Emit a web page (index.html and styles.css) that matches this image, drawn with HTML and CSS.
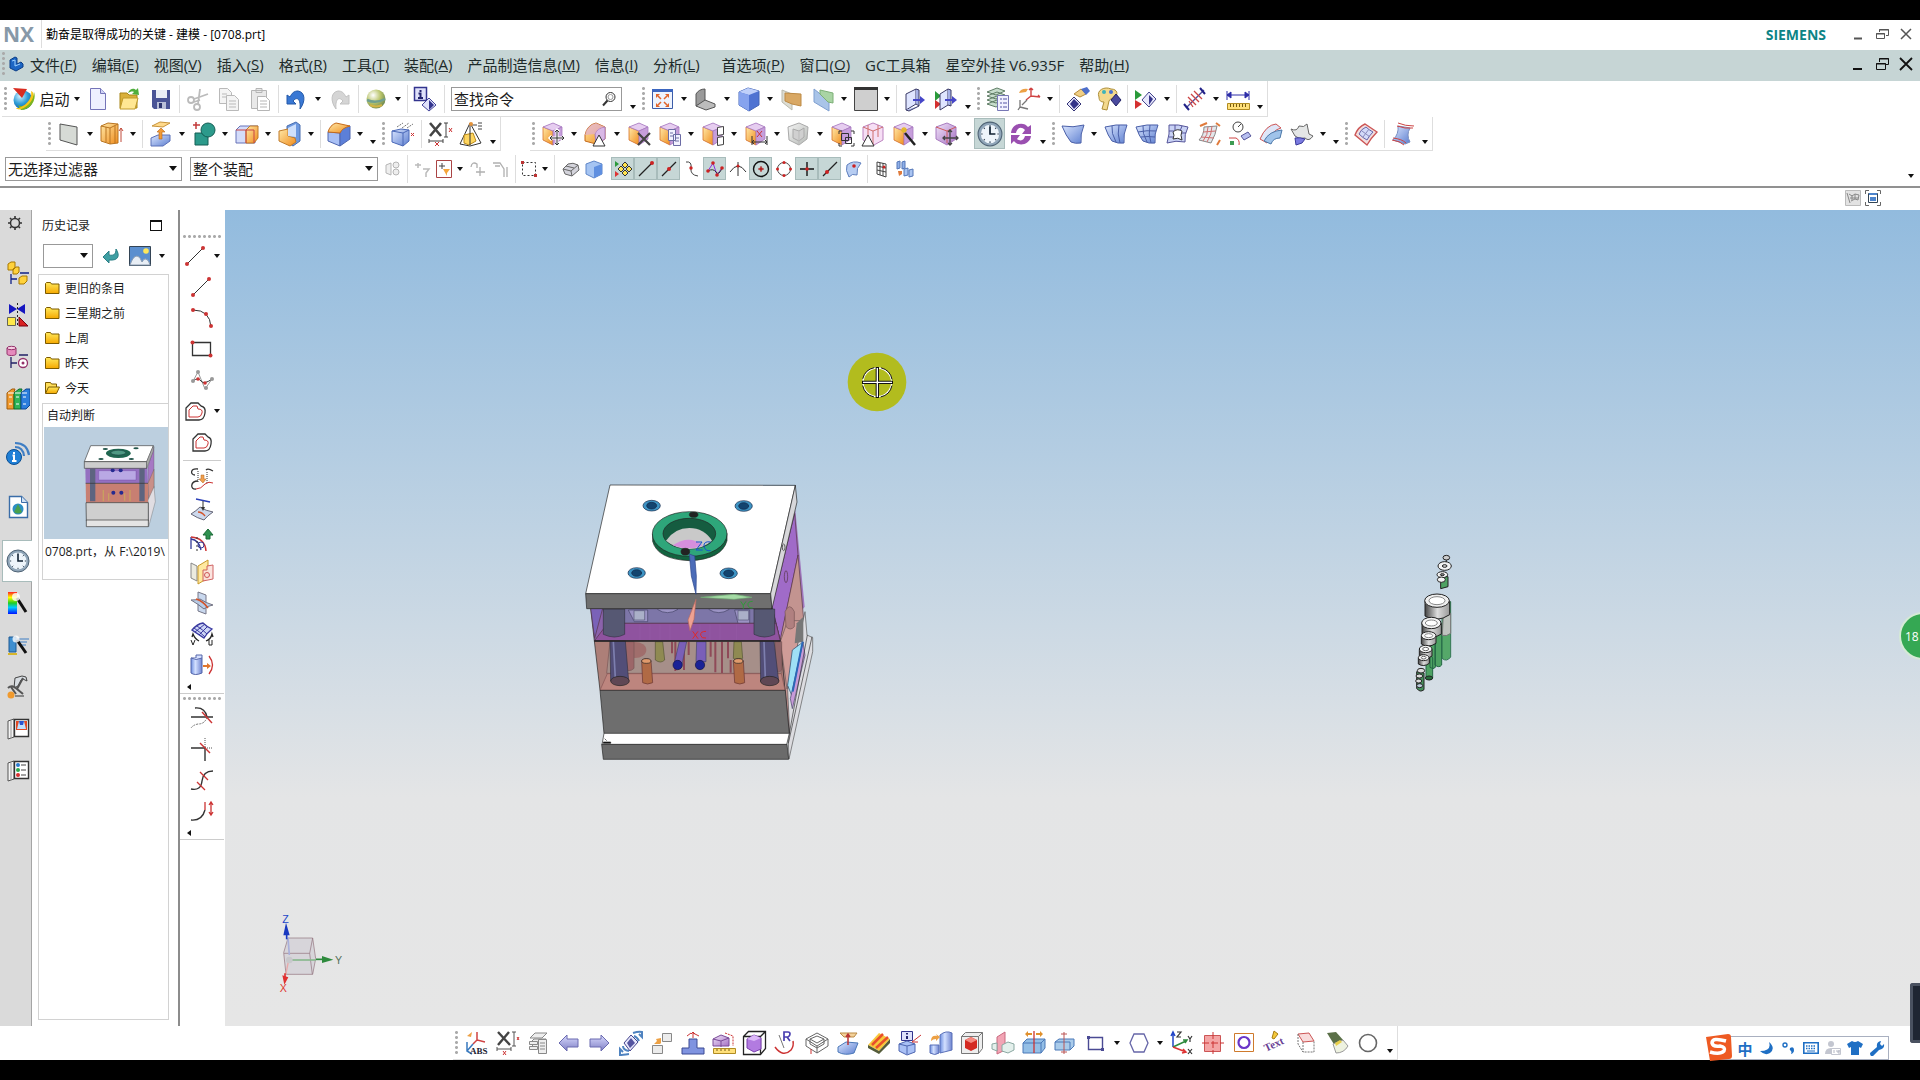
FILE: index.html
```html
<!DOCTYPE html>
<html lang="zh-CN">
<head>
    <meta charset="UTF-8">
    <meta name="viewport" content="width=device-width, initial-scale=1.0">
    <title>建模 - [0708.prt]</title>
    <link rel="stylesheet" href="styles.css">
</head>
<body>

<!-- Shared gradients and shapes -->
<svg class="defs" aria-hidden="true">
    <defs>
        <linearGradient id="gBlue" x1="0" y1="0" x2="1" y2="1"><stop offset="0" stop-color="#dbe6ff"/><stop offset="1" stop-color="#5d7fd0"/></linearGradient>
        <linearGradient id="gBlueH"><stop offset="0" stop-color="#6d8ee0"/><stop offset=".4" stop-color="#d3e0ff"/><stop offset="1" stop-color="#6e83cf"/></linearGradient>
        <linearGradient id="gGold" x1="0" y1="0" x2="1" y2="1"><stop offset="0" stop-color="#ffe9a8"/><stop offset="1" stop-color="#f08c1c"/></linearGradient>
        <linearGradient id="gPurple" x1="0" y1="0" x2="1" y2="1"><stop offset="0" stop-color="#f0e4f8"/><stop offset="1" stop-color="#a571c4"/></linearGradient>
        <linearGradient id="gArrow" x1="0" y1="0" x2="0" y2="1"><stop offset="0" stop-color="#d9dbff"/><stop offset="1" stop-color="#7f7fc4"/></linearGradient>
        <linearGradient id="gGray" x1="0" y1="0" x2="1" y2="1"><stop offset="0" stop-color="#f5f5f5"/><stop offset="1" stop-color="#b5b9b5"/></linearGradient>
        <linearGradient id="gFolder" x1="0" y1="0" x2="0" y2="1"><stop offset="0" stop-color="#ffe95c"/><stop offset="1" stop-color="#f5a800"/></linearGradient>
        <linearGradient id="gRainbow" x1="0" y1="0" x2="0" y2="1"><stop offset="0" stop-color="#f22"/><stop offset=".25" stop-color="#ff0"/><stop offset=".5" stop-color="#2c2"/><stop offset=".7" stop-color="#0cf"/><stop offset="1" stop-color="#01f"/></linearGradient>
        <linearGradient id="gSteel"><stop offset="0" stop-color="#444"/><stop offset=".5" stop-color="#ddd"/><stop offset="1" stop-color="#999"/></linearGradient>
        <radialGradient id="gGlobe" cx=".35" cy=".3" r=".8"><stop offset="0" stop-color="#fff"/><stop offset=".5" stop-color="#b9c46a"/><stop offset="1" stop-color="#5f7c4c"/></radialGradient>
        <radialGradient id="gEarth" cx=".35" cy=".3" r=".8"><stop offset="0" stop-color="#d7f3ff"/><stop offset=".5" stop-color="#2f9ed8"/><stop offset="1" stop-color="#0d4f96"/></radialGradient>
    </defs>
    <symbol id="cube" viewBox="0 0 26 26">
        <path d="M3 6 13 2l9 4v12l-9 6-10-5z" fill="#b78bcf"/>
        <path d="M3 6l10 4v14L3 19z" fill="url(#gGold)" stroke="#d8752a" stroke-width=".8"/>
        <path d="M3 6l10-4 9 4-9 4z" fill="#e6cdf0" stroke="#a87bc0" stroke-width=".8"/>
        <path d="M13 10l9-4v12l-9 6z" fill="#c69edb" stroke="#a87bc0" stroke-width=".8"/>
    </symbol>
    <symbol id="bluecube" viewBox="0 0 26 26">
        <path d="M3 6l9-4 11 3v14l-10 6-10-6z" fill="#4f73d2" stroke="#4566b8"/>
        <path d="M3 6l9-4 11 3-10 4z" fill="#bfd0fa"/>
        <path d="M3 6l10 3v16L3 19z" fill="#86a3ee"/>
    </symbol>
    <symbol id="clock" viewBox="0 0 24 24">
        <circle cx="12" cy="12" r="11" fill="#8fa5b8" stroke="#4f6375"/>
        <circle cx="12" cy="12" r="8.5" fill="#eef5fb"/>
        <path d="M12 5v7h5" fill="none" stroke="#123" stroke-width="1.6"/>
        <path d="M12 3.8v1.4M12 18.8v1.4M3.8 12h1.4M18.8 12h1.4M6.2 6.2l1 1M17.8 6.2l-1 1M6.2 17.8l1-1M17.8 17.8l-1-1" stroke="#345"/>
    </symbol>
    <symbol id="folder" viewBox="0 0 15 13">
        <path d="M.5 2.5l1-1h4l1 1.5h7.5v9.5H.5z" fill="url(#gFolder)" stroke="#7d5b00"/>
    </symbol>
    <symbol id="book" viewBox="0 0 24 24">
        <path d="M2 4l6-2v18l-6 2z" fill="#f4f4f4" stroke="#555"/><path d="M5 4v17" stroke="#999"/>
        <path d="M8.5 2.5h14v17h-14z" fill="#fff" stroke="#333" stroke-width="1.4"/>
    </symbol>
</svg>

<div class="app">
    <header class="titlebar">
        <span class="logo">NX</span>
        <h1 class="title">勤奋是取得成功的关键 - 建模 - [0708.prt]</h1>
        <span class="brand">SIEMENS</span>
        <div class="winbtns">
            <button aria-label="最小化"><svg viewBox="0 0 16 16"><path d="M4 12.5h8" stroke-width="2"/></svg></button>
            <button aria-label="还原"><svg viewBox="0 0 16 16"><path d="M5.5 6V3.5h9v6H12M2.5 7.5h8v5h-8zM5 4h10M2 8h9"/></svg></button>
            <button aria-label="关闭"><svg viewBox="0 0 16 16"><path d="M3 3l10 10M13 3L3 13" stroke-width="1.5"/></svg></button>
        </div>
    </header>

    <nav class="menubar">
        <span class="grip"></span>
        <svg class="menuicon" viewBox="0 0 16 16"><path d="M2 4l5-3 2 1v6l4-2 2 2v3l-7 4-6-3z" fill="#1c66c4" stroke="#0b3d86"/><path d="M4 5l3-1v6l5-2" fill="none" stroke="#9cd0ff"/></svg>
        <button>文件(<u>F</u>)</button>
        <button>编辑(<u>E</u>)</button>
        <button>视图(<u>V</u>)</button>
        <button>插入(<u>S</u>)</button>
        <button>格式(<u>R</u>)</button>
        <button>工具(<u>T</u>)</button>
        <button>装配(<u>A</u>)</button>
        <button>产品制造信息(<u>M</u>)</button>
        <button>信息(<u>I</u>)</button>
        <button class="wide">分析(<u>L</u>)</button>
        <button>首选项(<u>P</u>)</button>
        <button>窗口(<u>O</u>)</button>
        <button>GC工具箱</button>
        <button>星空外挂 V6.935F</button>
        <button>帮助(<u>H</u>)</button>
        <div class="winbtns dark">
            <button aria-label="最小化窗口"><svg viewBox="0 0 16 16"><path d="M3 13h9" stroke-width="2"/></svg></button>
            <button aria-label="还原窗口"><svg viewBox="0 0 16 16"><path d="M5.5 6V2.5h9v6H12M2.5 7.5h9v6h-9zM5 3h10M2 8h10"/></svg></button>
            <button aria-label="关闭窗口"><svg viewBox="0 0 16 16"><path d="M2 2l12 12M14 2L2 14" stroke-width="1.8"/></svg></button>
        </div>
    </nav>

    <!-- Standard / view / utility toolbars -->
    <div class="row row1">
        <div class="toolbar">
            <span class="grip"></span>
            <button class="start"><svg viewBox="0 0 26 26"><circle cx="13" cy="14" r="9.5" fill="url(#gEarth)"/><path d="M8 19c5 4 15-3 16-13 3 8-4 18-13 18z" fill="#7bb41e"/><path d="M21 5c4 1 3 8-2 13-5 5-11 7-13 4 6 1 17-8 15-17z" fill="#f5c518"/><path d="M3 2l14 1-5 9z" fill="#d92c20"/></svg>启动</button>
            <button class="dd" aria-label="启动选项"></button>
            <button class="tb" aria-label="新建"><svg viewBox="0 0 26 26"><path d="M4.500 2.500h10l5 5v16h-15z" fill="#eef0ff" stroke="#7474b8"/><path d="M14.500 2.500v5h5" fill="#cfd3f5" stroke="#7474b8"/></svg></button>
            <button class="tb" aria-label="打开"><svg viewBox="0 0 26 26"><path d="M3 7h7l2 2h8v13H3z" fill="#d9b13a" stroke="#a98618"/><path d="M3 23l3-11h15l-3 11z" fill="#ffe793" stroke="#c09a2b"/><path d="M11 7c2-5 6-5 8-3l2-2 1 7-7-1 2-2c-2-1-4 0-6 1z" fill="#4fae3c"/></svg></button>
            <button class="tb" aria-label="保存"><svg viewBox="0 0 26 26"><path d="M4 4h18v19H6l-2-2z" fill="#4a5496"/><path d="M8 4h11v8H8z" fill="#e9edf5"/><path d="M9 16h9v7H9z" fill="#b9bfd8"/><path d="M11 17h3v5h-3z" fill="#2d3570"/></svg></button>
            <span class="sep"></span>
            <button class="tb" aria-label="剪切"><svg viewBox="0 0 26 26" fill="none" stroke="#bbb" stroke-width="1.8"><circle cx="6" cy="14" r="3"/><circle cx="12" cy="21" r="3"/><path d="M9 13l14-5M13 18l2-15M9 16l6-2"/></svg></button>
            <button class="tb" aria-label="复制"><svg viewBox="0 0 26 26" fill="#f4f4f4" stroke="#b9b9b9"><path d="M3.5 2.5h8l4 4v11h-12z"/><path d="M10.5 9.5h8l4 4v11h-12zM13 15h7M13 18h7M13 21h7M6 8h5M6 11h4"/></svg></button>
            <button class="tb" aria-label="粘贴"><svg viewBox="0 0 26 26" fill="#e9e9e9" stroke="#b5b5b5"><path d="M4.5 4.5h15v18h-15zM9 2.5h6v4H9z"/><path d="M10.5 10.5h8l4 4v10h-12zM13 15h7M13 18h7M13 21h7" fill="#fff"/></svg></button>
            <span class="sep"></span>
            <button class="tb" aria-label="撤销"><svg viewBox="0 0 26 26"><path d="M3 9v9h9l-3-3c4-5 8-2 7 8 6-8 5-17-2-18-4 0-6 2-8 6z" fill="#3978d4" stroke="#2459a8"/></svg></button>
            <button class="dd" aria-label="撤销列表"></button>
            <button class="tb" aria-label="重做"><svg viewBox="0 0 26 26"><path d="M22 9v9h-9l3-3c-4-5-8-2-7 8-6-8-5-17 2-18 4 0 6 2 8 6z" fill="#d5d5d5" stroke="#c2c2c2"/></svg></button>
            <span class="sep"></span>
            <button class="tb" aria-label="渲染"><svg viewBox="0 0 26 26"><circle cx="12" cy="13" r="9.500" fill="url(#gGlobe)"/><path d="M3 14q9 4 18-1" stroke="#6f9f90" stroke-width="2.500" fill="none"/><path d="M6 19q6 3 12 0" stroke="#d3b445" stroke-width="2" fill="none"/></svg></button>
            <button class="dd" aria-label="渲染选项"></button>
            <span class="sep"></span>
            <button class="tb" aria-label="命令信息"><svg viewBox="0 0 26 26"><path d="M1.5 1.5h12v13h-12z" fill="#dfe1fa" stroke="#33348e" stroke-width="1.5"/><path d="M7.5 4v2M5.5 7.5h2v4M5 12h5" stroke="#22236f" stroke-width="2" fill="none"/><path d="M9 19l7-7 7 7-7 6z" fill="#dfe1fa" stroke="#44459a"/><path d="M16 14v10l5-5z" fill="#33348e"/></svg></button>
            <span class="sep"></span>
            <label class="search"><input type="text" value="查找命令" aria-label="查找命令"><svg viewBox="0 0 16 16" fill="none" stroke="#333"><circle cx="9.5" cy="6" r="4.5"/><circle cx="9.5" cy="6" r="2.5" stroke="#999"/><path d="M6.5 9.5L2 14.5" stroke-width="2"/></svg></label>
            <button class="more" aria-label="更多标准工具"></button>
        </div>
        <div class="toolbar">
            <span class="grip"></span>
            <button class="tb" aria-label="适合窗口"><svg viewBox="0 0 26 26"><path d="M2.5 3.5h20v19h-20z" fill="#eef3fd" stroke="#3c5ca8"/><path d="M2 3h21v3H2z" fill="#3b66c0"/><path d="M8 10l3 3M17 10l-3 3M8 19l3-3M17 19l-3-3" stroke="#e0642a" stroke-width="1.5"/><path d="M6 8h4l-4 4zM19 8h-4l4 4zM6 21h4l-4-4zM19 21h-4l4-4z" fill="#e0642a"/></svg></button>
            <button class="dd" aria-label="适合窗口选项"></button>
            <button class="tb" aria-label="定向视图"><svg viewBox="0 0 26 26" stroke="#555"><path d="M3 8q3-5 9-5v12l-9 5z" fill="#9a9a9a"/><path d="M3 20l9-6 10 4v3l-9 3z" fill="#bcbcbc"/></svg></button>
            <button class="dd" aria-label="定向视图选项"></button>
            <button class="tb" aria-label="着色"><svg viewBox="0 0 26 26"><use href="#bluecube"/></svg></button>
            <button class="dd" aria-label="着色选项"></button>
            <button class="tb" aria-label="编辑截面"><svg viewBox="0 0 26 26"><path d="M3 4l10 4v16L3 16z" fill="#dcdcd2" stroke="#b9b9ad"/><path d="M6 7l16 1v12l-9-2-7-3z" fill="#d9a864" stroke="#bd8a44"/></svg></button>
            <button class="tb" aria-label="剪切截面"><svg viewBox="0 0 26 26"><path d="M4 3l15 12v10L4 16z" fill="#a9c4e8" stroke="#7f9fd0"/><path d="M10 4l13 3v10l-5-1-8-8z" fill="#a9d4a4" stroke="#7db077"/></svg></button>
            <button class="dd" aria-label="剪切截面选项"></button>
            <button class="tb" aria-label="背景"><svg viewBox="0 0 26 26"><path d="M1.5 1.5h23v23h-23z" fill="#cfcfcf" stroke="#444"/><path d="M1 1h24v3H1z" fill="#333"/></svg></button>
            <button class="dd" aria-label="背景选项"></button>
            <span class="sep"></span>
            <button class="tb" aria-label="显示"><svg viewBox="0 0 26 26"><path d="M4 8l10-5v15l-10 6z" fill="#dfe5ff" stroke="#3a3a66"/><path d="M14 3l3 1v16l-3-2M4 24l3 1 10-5" fill="#a6b1e5" stroke="#3a3a66"/><path d="M11 13h7v-3l5 4-5 4v-3h-7z" fill="#4646c8"/></svg></button>
            <button class="tb" aria-label="隐藏"><svg viewBox="0 0 26 26"><path d="M2 5l6 5-6 5z" fill="#2a9a3a"/><path d="M2 14l6 4-6 5z" fill="#d43030"/><path d="M7 8l8-5v16l-8 5z" fill="#dfe5ff" stroke="#3a3a66"/><path d="M15 3l3 1v16l-3-1" fill="#a6b1e5" stroke="#3a3a66"/><path d="M12 13h7v-3l5 4-5 4v-3h-7z" fill="#4646c8"/></svg></button>
            <button class="more" aria-label="更多视图工具"></button>
        </div>
        <div class="toolbar end">
            <span class="grip"></span>
            <button class="tb" aria-label="图层设置"><svg viewBox="0 0 26 26" stroke="#5f7d66"><path d="M2 18l10-4 8 3-9 4zM2 14l10-4 8 3-9 4zM2 10l10-4 8 3-9 4zM2 6l10-4 8 3-9 4z" fill="#c6dccb"/><path d="M12.5 9.5h11v15h-11z" fill="#f1f1ff" stroke="#7777b5"/><path d="M15 13h2M15 17h2M15 21h2M18 13h4M18 17h4M18 21h4" stroke="#5555a5"/></svg></button>
            <button class="tb" aria-label="WCS"><svg viewBox="0 0 26 26" fill="none"><path d="M3 7q2-5 9-4l-2 3z" fill="#eda145"/><path d="M15 2v8l-5 4M15 10l9 1M15 2l-2 2M15 2l2 2M24 11l-2-2" stroke="#cf4343" stroke-width="1.4"/><path d="M4 14v7l-2 3M4 21l8 2M6 19l5-5" stroke="#777" stroke-width="1.3"/></svg></button>
            <button class="dd" aria-label="WCS 选项"></button>
            <span class="sep"></span>
            <button class="tb" aria-label="编辑显示"><svg viewBox="0 0 26 26"><path d="M2 18l7-7 7 7-7 7z" fill="#e7e7fb" stroke="#333377"/><path d="M9 13l5 5-5 5-4-5z" fill="#35358a"/><path d="M9 8l7-5 5 5-6 3z" fill="#f0cf85" stroke="#b48a3b"/><path d="M16 3l6-2 3 4-4 4z" fill="#4e6fcb"/></svg></button>
            <button class="tb" aria-label="对象显示"><svg viewBox="0 0 26 26"><path d="M3 11c-3-7 6-11 12-8 7 0 7 6 4 8-2 2-5 1-6 4l-2 9-5-1 2-7c-3 0-5-1-5-5z" fill="#f3d98d" stroke="#ad8e38"/><circle cx="8" cy="6" r="2" fill="#3cb4bb"/><circle cx="15" cy="6" r="2" fill="#4a72d0"/><path d="M15 14l5-6 5 6-5 6z" fill="#4a4a9e" stroke="#222266"/></svg></button>
            <span class="sep"></span>
            <button class="tb" aria-label="显示和隐藏"><svg viewBox="0 0 26 26"><path d="M2 4l7 5-7 5z" fill="#2a9a3a"/><path d="M2 14l7 4-7 5z" fill="#d43030"/><path d="M9 14l7-8 7 7-7 8z" fill="#e7e7fb" stroke="#44448c"/><path d="M16 9l4 4-4 6z" fill="#35358a"/></svg></button>
            <button class="dd" aria-label="显示和隐藏选项"></button>
            <span class="sep"></span>
            <button class="tb" aria-label="测量"><svg viewBox="0 0 26 26" fill="none" stroke="#cc4545" stroke-width="1.3"><path d="M4 22L22 4" stroke="#4d4d9d"/><path d="M6 11l8 8M9 8l8 8M12 5l8 8M7 15l4 6"/><path d="M2 18l5 6M18 2l5 6" stroke="#222288" stroke-width="2"/></svg></button>
            <button class="dd" aria-label="测量选项"></button>
            <button class="tb" aria-label="测量距离"><svg viewBox="0 0 26 26"><path d="M2 5v9M24 5v9" stroke="#2c2ca8"/><path d="M2 9h22M2 9l4-3v6zM24 9l-4-3v6z" fill="#2c2ca8" stroke="#2c2ca8"/><path d="M2.5 17.5h22v6h-22z" fill="#ffe07a" stroke="#b18c22"/><path d="M5.5 18v3M8.5 18v3M11.5 18v3M14.5 18v3M17.5 18v3M20.5 18v3" stroke="#775c11"/></svg></button>
            <button class="more" aria-label="更多实用工具"></button>
        </div>
    </div>

    <!-- Feature / synchronous modelling / surface toolbars -->
    <div class="row row2">
        <div class="toolbar">
            <span class="grip"></span>
            <button class="tb" aria-label="基准平面"><svg viewBox="0 0 26 26"><path d="M4 3l17 3v18L4 19z" fill="#d6dad5" stroke="#555"/></svg></button>
            <button class="dd" aria-label="基准平面选项"></button>
            <button class="tb" aria-label="拉伸"><svg viewBox="0 0 26 26" stroke="#b97522"><path d="M2 5l7-3 10 1v19l-8 1-9-3z" fill="url(#gGold)"/><path d="M7 6v15M11 7v16M16 5v17M2 5l9 2 8-4" fill="none"/><path d="M22 7v14M20 10l2-3 2 3" stroke="#c04a3a" fill="none"/></svg></button>
            <button class="dd" aria-label="拉伸选项"></button>
            <span class="sep"></span>
            <button class="tb" aria-label="偏置面"><svg viewBox="0 0 26 26"><path d="M4 5l8-4 10 1-7 4z" fill="#ffd98a" stroke="#c8943c"/><path d="M3 17l7-3h12v6l-7 5H3z" fill="url(#gBlue)" stroke="#5a70b8"/><path d="M13 7l4 4h-3v7h-3v-7H9z" fill="#f29b36" stroke="#b5651a" stroke-width=".6"/></svg></button>
            <button class="dd" aria-label="偏置面选项"></button>
            <button class="tb" aria-label="合并"><svg viewBox="0 0 26 26"><path d="M4 12h13v12H4z" fill="#2c9a8b" stroke="#155e55"/><circle cx="17" cy="9" r="7" fill="#2c9a8b" stroke="#155e55"/><path d="M5 1v7M2 4h7" stroke="#c23a3a" stroke-width="1.5"/></svg></button>
            <button class="dd" aria-label="合并选项"></button>
            <button class="tb" aria-label="分割"><svg viewBox="0 0 26 26"><path d="M2 9l4-4h18l-3 4v13H2z" fill="#d4dcfa" stroke="#6673b8"/><path d="M12 9l4-4h8v12l-4 5h-8z" fill="url(#gGold)" stroke="#c07a2a"/><path d="M2 9h18v13M12 9v13" fill="none" stroke="#c94444"/></svg></button>
            <button class="dd" aria-label="分割选项"></button>
            <button class="tb" aria-label="修剪体"><svg viewBox="0 0 26 26"><path d="M10 5l9-4 4 3v16l-7 5-6-4z" fill="#6d99e0" stroke="#4a6fb0"/><path d="M2 10l9-2v7l7 2 1 4-6 4-11-5z" fill="url(#gGold)" stroke="#c07a2a"/><path d="M11 7l8-4v13l-8-1z" fill="#cfe0fb"/></svg></button>
            <button class="dd" aria-label="修剪体选项"></button>
            <span class="sep"></span>
            <button class="tb" aria-label="边倒圆"><svg viewBox="0 0 26 26"><path d="M2 11l12 1v13L2 20z" fill="#a9c0f5" stroke="#4e66b0"/><path d="M14 12q1-5 10-7v13l-10 7z" fill="#5c7fd8" stroke="#4e66b0"/><path d="M2 11q2-7 8-9l14 3q-8 2-10 7z" fill="url(#gGold)" stroke="#c56a1a"/></svg></button>
            <button class="dd" aria-label="边倒圆选项"></button>
            <button class="more" aria-label="更多特征"></button>
        </div>
        <div class="toolbar end">
            <span class="grip"></span>
            <button class="tb" aria-label="阵列特征"><svg viewBox="0 0 26 26"><path d="M2 10l9-2 8 1v11l-6 5-11-4z" fill="url(#gBlue)" stroke="#4a68b8"/><path d="M2 10l11 2 6-3M13 12v13" fill="none" stroke="#4a68b8"/><path d="M7 6l6-4M12 7l7-5M17 7l6-4" stroke="#777" stroke-dasharray="2 1"/><path d="M21 12l3 3M24 12l-3 3" stroke="#c33"/></svg></button>
            <span class="sep"></span>
            <button class="tb" aria-label="表达式"><svg viewBox="0 0 26 26"><path d="M3 2l11 13M14 2L3 15" stroke="#444" stroke-width="2.6"/><path d="M19 2v14M17 2h4M17 16h4M2 20h14M2 18v4M16 18v4" stroke="#444"/><path d="M22 7l3 4M25 7l-3 4M8 21l4 4M12 21l-4 4" stroke="#c33"/></svg></button>
            <button class="tb" aria-label="参考"><svg viewBox="0 0 26 26"><path d="M12 2L2 23l10 2 11-3z" fill="none" stroke="#333"/><path d="M6 14l9-2 3 8-7 4-5-2z" fill="#ffd65f" stroke="#b98a1a"/><path d="M12 2v22" stroke="#333"/><path d="M14 4h5M20 2h4M20 5h4M20 8h4" stroke="#444"/><circle cx="13" cy="3" r="2" fill="#e4933a"/></svg></button>
            <button class="more" aria-label="更多特征操作"></button>
        </div>
        <div class="toolbar gap">
            <span class="grip"></span>
            <button class="tb" aria-label="移动面"><svg viewBox="0 0 26 26"><use href="#cube"/><path d="M17 9v15M10 17h14M15 11l2-2 2 2M15 22l2 2 2-2M12 15l-2 2 2 2M22 15l2 2-2 2" fill="none" stroke="#fff" stroke-width="3"/><path d="M17 9v15M10 17h14M15 11l2-2 2 2M15 22l2 2 2-2M12 15l-2 2 2 2M22 15l2 2-2 2" fill="none" stroke="#333"/></svg></button>
            <button class="dd" aria-label="移动面选项"></button>
            <button class="tb" aria-label="拉出面"><svg viewBox="0 0 26 26"><path d="M2 14q2-10 11-12l9 4v12l-9 5-11-3z" fill="url(#gGold)" stroke="#c56a1a"/><path d="M12 13q2-6 10-7v12l-9 5z" fill="#d9b8e6" stroke="#a87bc0"/><path d="M2 14q2-10 11-12l9 4q-8 1-10 7z" fill="#e0aed0" opacity=".7"/><path d="M16 14l6 11H10z" fill="#fff" stroke="#333"/></svg></button>
            <button class="dd" aria-label="拉出面选项"></button>
            <button class="tb" aria-label="删除面"><svg viewBox="0 0 26 26"><use href="#cube"/><path d="M12 12l12 12M24 12L12 24" stroke="#444" stroke-width="2.2"/></svg></button>
            <button class="tb" aria-label="复制面"><svg viewBox="0 0 26 26"><use href="#cube"/><path d="M11.5 8.5h7v11h-7zM16.5 13.5h7v11h-7z" fill="#f2f2ff" stroke="#6c6ca5"/><path d="M13 12h3M13 15h3M18 17h4M18 20h4" stroke="#6c6ca5"/></svg></button>
            <button class="dd" aria-label="复制面选项"></button>
            <button class="tb" aria-label="设为共面"><svg viewBox="0 0 26 26"><use href="#cube"/><path d="M17.5 6.5l6-1v8l-6 1zM17.5 16.5l6-1v8l-6 1z" fill="#fff" stroke="#444"/></svg></button>
            <button class="dd" aria-label="设为共面选项"></button>
            <button class="tb" aria-label="线性尺寸"><svg viewBox="0 0 26 26"><use href="#cube"/><path d="M9 15v9M24 15v9M9 21h15M11 19l-2 2 2 2M22 19l2 2-2 2" stroke="#333" fill="none"/><path d="M14 10l5 6M19 10l-5 6" stroke="#c33"/></svg></button>
            <button class="dd" aria-label="线性尺寸选项"></button>
            <button class="tb" aria-label="壳体"><svg viewBox="0 0 26 26"><path d="M2 6l11-4 9 4-1 12-8 6-10-5z" fill="url(#gGray)" stroke="#aaa"/><path d="M7 8l6 2 5-3v9l-5 4-6-3z" fill="#d0d0d0" stroke="#aaa"/><path d="M13 10v14" stroke="#bbb" fill="none"/></svg></button>
            <button class="dd" aria-label="壳体选项"></button>
            <button class="tb" aria-label="组合面"><svg viewBox="0 0 26 26"><use href="#cube"/><path d="M12.5 12.5h7v7h-7zM16.5 16.5h6v6h-6z" fill="none" stroke="#333"/><path d="M10 10h3M10 10v3M25 25h-3M25 25v-3M25 10h-3M25 10v3M10 25h3M10 25v-3" stroke="#333"/></svg></button>
            <button class="tb" aria-label="优化面"><svg viewBox="0 0 26 26"><path d="M3 6l10-4 10 4v13l-9 5-11-5z" fill="#f6dff5" stroke="#bd84c0"/><path d="M3 6l10 4 10-4M13 10v14M8 4v12M18 4v12" fill="none" stroke="#cf6f6f"/><path d="M8 14l6 11H2z" fill="#fff" stroke="#333"/></svg></button>
            <button class="tb" aria-label="识别面"><svg viewBox="0 0 26 26"><use href="#cube"/><path d="M14 12l10 12" stroke="#222" stroke-width="2.5"/><path d="M13 6v6M10 9h6M11 7l4 4M15 7l-4 4" stroke="#e3b82c" stroke-width="1.3"/></svg></button>
            <button class="dd" aria-label="识别面选项"></button>
            <button class="tb" aria-label="移动边"><svg viewBox="0 0 26 26"><path d="M2 6l11-4 9 4v12l-9 6-11-6z" fill="url(#gPurple)" stroke="#a87bc0"/><path d="M2 6l11 4 9-4M13 10v12" fill="none" stroke="#cf5c5c"/><path d="M16 9v15M9 17h15M14 11l2-2 2 2M14 22l2 2 2-2M11 15l-2 2 2 2M22 15l2 2-2 2" fill="none" stroke="#444" stroke-width="1.3"/></svg></button>
            <button class="dd" aria-label="移动边选项"></button>
            <button class="tb on" aria-label="历史记录模式" aria-pressed="true"><svg viewBox="0 0 24 24"><use href="#clock"/></svg></button>
            <button class="tb" aria-label="切换模式"><svg viewBox="0 0 26 26"><path d="M3 12C4 2 16 0 20 6l3-2v9h-9l3-4c-4-4-8-2-9 3zM23 15c-1 9-13 11-17 5l-3 3v-9h9l-3 4c4 3 7 1 8-3z" fill="#9a4fb0"/></svg></button>
            <button class="more" aria-label="更多同步建模"></button>
        </div>
        <div class="toolbar">
            <span class="grip"></span>
            <button class="tb" aria-label="直纹"><svg viewBox="0 0 26 26"><path d="M2 5q11 2 22-1-4 9-3 18-6 1-10-1Q6 15 2 5z" fill="url(#gBlue)" stroke="#4a5fa8"/></svg></button>
            <button class="dd" aria-label="直纹选项"></button>
            <button class="tb" aria-label="通过曲线组"><svg viewBox="0 0 26 26"><path d="M2 6q11-3 22-2-4 9-3 18-6 1-12-2Q5 15 2 6z" fill="url(#gBlue)" stroke="#4a5fa8"/><path d="M9 5q-1 7 4 16M16 4q-2 9 1 18" fill="none" stroke="#4a5fa8"/></svg></button>
            <button class="tb" aria-label="通过曲线网格"><svg viewBox="0 0 26 26"><path d="M2 6q11-3 22-2-4 9-3 18-6 1-12-2Q5 15 2 6z" fill="url(#gBlue)" stroke="#4a5fa8"/><path d="M9 5q-1 7 4 16M16 4q-2 9 1 18M4 11q9-2 18-1M7 16q7-1 14 0" fill="none" stroke="#4a5fa8"/></svg></button>
            <button class="tb" aria-label="N 边曲面"><svg viewBox="0 0 26 26"><path d="M4 4q9-1 19 2-4 8-3 15-9-2-18 1 3-9 2-18z" fill="#c9d2f5" stroke="#55559a"/><path d="M8 18q2-4 0-7 4-4 9-1-2 4 0 9-4-3-9-1z" fill="#fff" stroke="#333"/><path d="M10 4v5M17 5l-2 5M4 10h5M4 16h4M21 12h-4" stroke="#55559a"/></svg></button>
            <button class="tb" aria-label="扫掠"><svg viewBox="0 0 26 26"><path d="M8 6l13-1q-1 8-6 17l-12-3q5-5 5-13z" fill="#e4e6ea" stroke="#888"/><path d="M12 6q0 8-5 14M16 5q0 8-5 16M7 11l13-1M5 16l13 1" stroke="#cf6f6f" fill="none"/><path d="M4 5l7-3M21 24l3-5M20 2l4 3" stroke="#e07b3c" stroke-width="2"/></svg></button>
            <button class="tb" aria-label="剖切曲面"><svg viewBox="0 0 26 26" fill="none" stroke="#444"><circle cx="11" cy="6" r="5"/><path d="M11 6l3-3"/><path d="M14 15l7-4 3 4-7 4z" fill="#b7bff0" stroke="#55559a"/><path d="M2 17h7q4 2 3 7" stroke="#c44"/><path d="M3 20h4v4H3z" fill="#3d9b52" stroke="none"/></svg></button>
            <button class="tb" aria-label="桥接"><svg viewBox="0 0 26 26"><path d="M2 18Q8 4 18 3l5 4Q14 9 9 22z" fill="#dfe6f8" stroke="#c55"/><path d="M6 20q5-10 18-11l-2 8q-7 0-9 6z" fill="#9fc3ea" stroke="#4a77a8"/></svg></button>
            <button class="tb" aria-label="片体"><svg viewBox="0 0 26 26"><path d="M2 8q6 3 8-3 5 2 8-2l2 10 4 2q-4 6-8 2-6 2-10-2z" fill="#e4e6e6" stroke="#666"/><path d="M6 17q5-1 10 1l-3 4-6 2z" fill="#7a7ae0" stroke="#3a3a9a"/></svg></button>
            <button class="dd" aria-label="片体选项"></button>
            <button class="more" aria-label="更多曲面"></button>
        </div>
        <div class="toolbar end">
            <span class="grip"></span>
            <button class="tb" aria-label="四点曲面"><svg viewBox="0 0 26 26"><path d="M2 14Q5 6 12 3q6 4 12 8-6 6-10 13Q8 19 2 14z" fill="#f3dede" stroke="#c55" stroke-width="1.4"/><path d="M6 13q2-5 7-7 3 3 7 5-4 4-6 8-4-2-8-6z" fill="#d4dbfa" stroke="#66a"/><path d="M9 10l8 6M16 8l-6 8" stroke="#88b"/></svg></button>
            <span class="sep"></span>
            <button class="tb" aria-label="管道"><svg viewBox="0 0 26 26"><path d="M8 5q7 1 12 2-4 7 0 14l-5 2-12-4q6-6 5-14z" fill="url(#gBlue)" stroke="#7a8fc0"/><path d="M8 2q7 3 16 3M7 5q8 3 16 2M2 19q8 1 12 5M3 17q9 1 13 5" stroke="#c44" fill="none"/></svg></button>
            <button class="more" aria-label="更多曲面操作"></button>
        </div>
    </div>

    <!-- Selection bar -->
    <div class="row row3">
        <label class="combo filter"><select aria-label="选择过滤器"><option>无选择过滤器</option></select></label>
        <label class="combo scope"><select aria-label="选择范围"><option>整个装配</option></select></label>
        <button class="sb" aria-label="仅在工作部件内"><svg viewBox="0 0 20 20" fill="#eee" stroke="#b5b5b5"><path d="M3 6l5-2v12l-5-2z"/><circle cx="13" cy="6" r="3"/><circle cx="13" cy="13" r="3"/></svg></button>
        <span class="sep"></span>
        <button class="sb" aria-label="过滤器重置"><svg viewBox="0 0 20 20" fill="none" stroke="#bbb" stroke-width="1.5"><path d="M6 4v5M3 6h6M11 10h6l-3 4v4"/></svg></button>
        <button class="sb tight" aria-label="类型过滤器"><svg viewBox="0 0 20 20"><path d="M2.5 1.5h15v17h-15z" fill="#fff" stroke="#a44"/><path d="M8 4v6M5 7h6" stroke="#444"/><path d="M9 10h7l-3 4v3z" fill="#f5a53a"/></svg></button>
        <button class="dd" aria-label="类型过滤器选项"></button>
        <button class="sb" aria-label="全不选"><svg viewBox="0 0 20 20" fill="none" stroke="#b0b0b0" stroke-width="1.3"><path d="M3 8q1-6 6-3v4M12 8v9M8 13h9"/></svg></button>
        <button class="sb" aria-label="向上一级"><svg viewBox="0 0 20 20" fill="none" stroke="#b0b0b0" stroke-width="1.3"><path d="M2 4h7l4 6v8M16 8v10M4 7h5"/></svg></button>
        <span class="sep"></span>
        <button class="sb tight" aria-label="矩形选择"><svg viewBox="0 0 20 20"><path d="M3.5 3.5h13v13h-13z" fill="none" stroke="#333" stroke-dasharray="2 2"/><path d="M2 2h3v3H2zM15 15h3v3h-3z" fill="#b33"/></svg></button>
        <button class="dd" aria-label="选择方式"></button>
        <span class="sep wider"></span>
        <button class="sb" aria-label="突出显示隐藏边"><svg viewBox="0 0 20 20" stroke="#666"><path d="M2 10l5-5q5-2 10 1l1 5-7 6-7-2z" fill="#d4d4dc"/><path d="M2 10l8 2 7-6M10 12l1 5M5 7l8 2" fill="none"/></svg></button>
        <button class="sb" aria-label="面选择"><svg viewBox="0 0 20 20"><path d="M2 5l8-3 8 3v10l-8 4-8-4z" fill="#a5c4f2" stroke="#5f86c8"/><path d="M10 8l8-3v10l-8 4z" fill="#5f8fe0"/></svg></button>
        <span class="sep clear"></span>
        <button class="sb on" aria-label="启用捕捉点"><svg viewBox="0 0 20 20"><path d="M2 2l4 3-4 3z" fill="#2a9a3a"/><path d="M2 12l4 3-4 3z" fill="#d33"/><path d="M12 3l3 3-3 3-3-3zM12 11l3 3-3 3-3-3zM8 7l3 3-3 3-3-3zM16 7l3 3-3 3-3-3z" fill="#ffe34d" stroke="#333"/></svg></button>
        <button class="sb on" aria-label="端点"><svg viewBox="0 0 20 20"><path d="M3 17L16 4" stroke="#222" stroke-width="1.3"/><circle cx="16" cy="4" r="2" fill="#c22"/></svg></button>
        <button class="sb on" aria-label="中点"><svg viewBox="0 0 20 20"><path d="M3 17L17 3" stroke="#222" stroke-width="1.3"/><circle cx="10" cy="10" r="2" fill="#c22"/></svg></button>
        <button class="sb" aria-label="控制点"><svg viewBox="0 0 20 20"><path d="M4 3q6-1 5 6t7 8" stroke="#444" fill="none"/><circle cx="9" cy="9" r="1.7" fill="#c22"/></svg></button>
        <button class="sb on" aria-label="定义点"><svg viewBox="0 0 20 20"><path d="M3 12L8 4l4 12 5-7" stroke="#8a2be2" fill="none"/><path d="M3 12q5-3 8 1t6-4" stroke="#333" fill="none"/><g fill="#c22"><circle cx="3" cy="12" r="1.8"/><circle cx="8" cy="4" r="1.8"/><circle cx="12" cy="16" r="1.8"/><circle cx="17" cy="9" r="1.8"/></g></svg></button>
        <button class="sb" aria-label="交点"><svg viewBox="0 0 20 20"><path d="M10 3v14M2 13q8-12 16 0" stroke="#333" fill="none"/><circle cx="10" cy="7" r="1.5" fill="#c22"/></svg></button>
        <button class="sb on" aria-label="圆弧中心"><svg viewBox="0 0 20 20"><circle cx="10" cy="10" r="7.5" fill="none" stroke="#111" stroke-width="1.4"/><circle cx="10" cy="10" r="1.8" fill="#c22"/><path d="M7 10h6M10 7v6" stroke="#a22"/></svg></button>
        <button class="sb" aria-label="象限点"><svg viewBox="0 0 20 20"><circle cx="10" cy="10" r="6.5" fill="none" stroke="#444"/><g fill="#c22"><circle cx="10" cy="3.5" r="1.5"/><circle cx="10" cy="16.5" r="1.5"/><circle cx="3.5" cy="10" r="1.5"/><circle cx="16.5" cy="10" r="1.5"/></g></svg></button>
        <button class="sb on" aria-label="现有点"><svg viewBox="0 0 20 20"><path d="M10 3v14M3 10h14" stroke="#111" stroke-width="1.4"/><circle cx="10" cy="10" r="1.8" fill="#c22"/></svg></button>
        <button class="sb on" aria-label="曲线上的点"><svg viewBox="0 0 20 20"><path d="M3 17L17 3" stroke="#222" stroke-width="1.3"/><circle cx="7" cy="13" r="2" fill="#c22"/></svg></button>
        <button class="sb" aria-label="面上的点"><svg viewBox="0 0 20 20"><path d="M4 6q6-5 14-2-5 5-4 12-5-2-8 2Q2 11 4 6z" fill="#b7cdf2" stroke="#5f7fbe"/><circle cx="11" cy="7" r="1.8" fill="#c22"/></svg></button>
        <span class="sep"></span>
        <button class="sb" aria-label="有界栅格"><svg viewBox="0 0 20 20" fill="none" stroke="#444"><path d="M5 3l9 2v13l-9-3zM8 4v12M11 4v13M5 7l9 2M5 11l9 2"/><circle cx="12" cy="8" r="1.5" fill="#c22" stroke="none"/></svg></button>
        <button class="sb" aria-label="工作部件"><svg viewBox="0 0 20 20"><path d="M2 3l3-1v7l-3 1zM7 3l3-1v7l-3 1z" fill="#8fb0e8" stroke="#5577b8"/><path d="M9 10l4-1v7l-4 1zM14 11l4-1v7l-4 1z" fill="#a9c4f2" stroke="#5577b8"/><path d="M3 12h4v3l-3 2z" fill="#e07b3c"/></svg></button>
        <button class="dd corner" aria-label="选择条选项"></button>
    </div>

    <div class="strip">
        <button aria-label="完成草图"><svg viewBox="0 0 16 16"><path d="M.5 .5h15v15H.5z" fill="#e2e2e2" stroke="#bbb"/><path d="M2 3l3 10M4 4l3 2 3-2 4 1-1 5-3-1-4 2M7 5v5M10 4v5M5 8h8" fill="none" stroke="#888"/></svg></button>
        <button aria-label="全屏"><svg viewBox="0 0 16 16"><path d="M.5 4V.5H4M12 .5h3.5V4M.5 12v3.500H4M12 15.500h3.500V12" fill="none" stroke="#666"/><path d="M3.5 3.5h9v9h-9z" fill="#fff" stroke="#345"/><path d="M4 3h8v2H4zM5 7h6v4H5z" fill="#4d84cc"/></svg></button>
    </div>

    <main class="work">
        <!-- Resource bar -->
        <div class="resbar">
            <button class="gear" aria-label="设置"><svg viewBox="0 0 14 14"><circle cx="7" cy="7" r="4.5" fill="none" stroke="#333" stroke-width="1.5"/><path d="M7 0v2M7 12v2M0 7h2M12 7h2M2 2l1.5 1.5M12 2l-1.5 1.5M2 12l1.5-1.5M12 12l-1.5-1.5" stroke="#333" stroke-width="1.6"/></svg></button>
            <button aria-label="装配导航器"><svg viewBox="0 0 24 24"><path d="M2 3l3-2h4v6l-2 2H2zM7 8l3-2h3v5l-2 2H7zM13 17l3-2h5v5l-3 3h-5z" fill="#ffd23c" stroke="#a87800"/><path d="M5 13v10M5 18h6M14 12h9" stroke="#112288" stroke-width="1.3"/></svg></button>
            <button aria-label="约束导航器"><svg viewBox="0 0 24 24"><path d="M3 1l8 5-8 5zM19 1l-8 5 8 5z" fill="#1616c0"/><path d="M11.5 0v24" stroke="#222" stroke-dasharray="2 2"/><path d="M1.5 14.5h8v8h-8z" fill="#ffe94a" stroke="#665"/><path d="M13 14v9h9z" fill="#d82222" stroke="#701"/></svg></button>
            <button aria-label="部件导航器"><svg viewBox="0 0 24 24"><path d="M1 3v6c0 2 9 2 9 0V3z" fill="#e58bbd" stroke="#94336b"/><ellipse cx="5.5" cy="3" rx="4.5" ry="1.7" fill="#f7cde2" stroke="#94336b"/><path d="M5 12v11M5 18h6M13 10h9" stroke="#222266" stroke-width="1.3"/><circle cx="17" cy="18" r="4.5" fill="#fff" stroke="#94336b" stroke-width="1.3"/><circle cx="17" cy="18" r="1.5" fill="#94336b"/></svg></button>
            <button aria-label="重用库"><svg viewBox="0 0 24 24"><path d="M1 6l5-4h3l-1 3v17H1z" fill="#f09a2e" stroke="#a35a08"/><path d="M8 6l5-4h3l-1 3v17H8z" fill="#2fb457" stroke="#0e6a2b"/><path d="M15 6l5-4h4v16l-4 4h-5z" fill="#2b7ddb" stroke="#0c4690"/><path d="M3 10h3M10 10h3M17 10h3M3 17h3M10 17h3M17 17h3M2 6h6M9 6h6M16 6h5" stroke="#fff"/></svg></button>
            <button class="spaced" aria-label="HD3D 工具"><svg viewBox="0 0 24 24"><circle cx="8" cy="16" r="7.5" fill="#1f7fd6" stroke="#0b4f94"/><path d="M8 11v2M6.5 14.5H8v5M6 20h4.5" stroke="#fff" stroke-width="2" fill="none"/><path d="M9 6q8 0 9 9M9 2q12 0 14 12" fill="none" stroke="#3f7ec4" stroke-width="2.2"/></svg></button>
            <button class="spaced" aria-label="浏览器"><svg viewBox="0 0 24 24"><path d="M3.5 1.5h12l6 6v15h-18z" fill="#fff" stroke="#3a6da8" stroke-width="1.4"/><path d="M15.5 1.5v6h6" fill="#cfe1f5" stroke="#3a6da8"/><circle cx="12" cy="14" r="5.5" fill="#2d8fc4"/><path d="M12 9l4 8q-4 3-8 0z" fill="#49a04e"/></svg></button>
            <button class="spaced on" aria-label="历史记录" aria-pressed="true"><svg viewBox="0 0 24 24"><use href="#clock"/></svg></button>
            <button aria-label="系统材料"><svg viewBox="0 0 24 24"><path d="M2 1h9v22H2z" fill="url(#gRainbow)"/><path d="M11 7l9 14" stroke="#111" stroke-width="3"/><circle cx="10" cy="6" r="4" fill="#fff" opacity=".8"/></svg></button>
            <button aria-label="加工向导"><svg viewBox="0 0 24 24"><path d="M3 4h7v15H3z" fill="#3f8fd0" stroke="#1f5a94"/><path d="M10 6h13M12 9h9M13 12h7" stroke="#3f7ec4"/><path d="M2 21h9" stroke="#d7b62c" stroke-width="2"/><path d="M11 7l9 13" stroke="#111" stroke-width="3"/><circle cx="10" cy="6" r="3.5" fill="#fff" opacity=".8"/></svg></button>
            <button aria-label="角色"><svg viewBox="0 0 24 24"><path d="M9 3l7-2 4 1 1 4-4-2-2 1-3 6-4 2z" fill="#d8dde2" stroke="#444"/><path d="M17 3l-6 11M2 13q4-4 9 1l6 5M5 12l5 7" stroke="#555" stroke-width="2" fill="none"/><circle cx="5" cy="20" r="3.5" fill="#f09a2e"/><path d="M9 21h9" stroke="#888" stroke-width="2"/></svg></button>
            <button aria-label="系统场景"><svg viewBox="0 0 24 24"><use href="#book"/><path d="M10 4h11v9H10z" fill="#e24a24"/><path d="M13 4h5l2 8h-9z" fill="#bfe0ff"/><path d="M13 4h5l-1 4h-3z" fill="#2a55d0"/></svg></button>
            <button aria-label="加工列表"><svg viewBox="0 0 24 24"><use href="#book"/><circle cx="12" cy="6" r="2" fill="#2a7ad0"/><circle cx="12" cy="11" r="2" fill="#2fa84f"/><circle cx="12" cy="16" r="2" fill="#d83030"/><path d="M15 6h5M15 11h5M15 16h5" stroke="#444"/></svg></button>
        </div>

        <!-- History panel -->
        <aside class="panel">
            <div class="panelhead"><h2>历史记录</h2><button aria-label="最大化面板"></button></div>
            <div class="paneltools">
                <label class="combo small"><select aria-label="历史筛选"><option></option></select></label>
                <button aria-label="返回"><svg viewBox="0 0 18 16"><path d="M1 9l6-6v4c5 1 7-1 7-6 4 6 3 12-7 11v3z" fill="#3f9fa3" stroke="#2a7f86"/></svg></button>
                <button aria-label="预览"><svg class="pic" viewBox="0 0 22 20"><path d="M.5 .5h21v19H.5z" fill="#5b8fcf" stroke="#345"/><circle cx="17" cy="5" r="2.8" fill="#ffe75a"/><path d="M1 19q3-9 7-9 3 0 5 6 2-4 4-3 3 1 4 6z" fill="#e8eef5" stroke="#8a9bb0"/></svg></button>
                <button class="dd" aria-label="预览选项"></button>
            </div>
            <div class="tree">
                <button><svg viewBox="0 0 15 13"><use href="#folder"/></svg>更旧的条目</button>
                <button><svg viewBox="0 0 15 13"><use href="#folder"/></svg>三星期之前</button>
                <button><svg viewBox="0 0 15 13"><use href="#folder"/></svg>上周</button>
                <button><svg viewBox="0 0 15 13"><use href="#folder"/></svg>昨天</button>
                <button><svg viewBox="0 0 15 13"><path d="M.5 12V1.500h5l1 1.500h5v3" fill="#ffdf5a" stroke="#7d5b00"/><path d="M.5 12.500l3-6.500h11l-3 6.500z" fill="url(#gFolder)" stroke="#7d5b00"/></svg>今天</button>
                <div class="card">
                    <h3>自动判断</h3>
                    <svg class="thumb" viewBox="132 681 372 336" role="img" aria-label="0708.prt">
                        <path d="M132 681h372v336H132z" fill="#bccfdf"/>
                        <path d="M444 800l18-60v120l-16 50z" fill="#a678c4" stroke="#555"/>
                        <path d="M444 850l18-42v55l-16 47z" fill="#c98f88" stroke="#555"/>
                        <path d="M444 900l18-40 4 45-20 75z" fill="#e0dde2" stroke="#555"/>
                        <path d="M256 804h186l2 46H257z" fill="#9470c0"/>
                        <path d="M257 850h187v58H258z" fill="#c87f72"/>
                        <path d="M270 806h16v98h-16zM418 806h16v98h-16z" fill="#5d6480"/>
                        <path d="M258 908h187v54H259z" fill="#cfcfcf" stroke="#333" stroke-width="2"/>
                        <path d="M259 960h186v20H259z" fill="#e4e4e4" stroke="#333" stroke-width="2"/>
                        <path d="M296 812h112v28H296z" fill="#b9a8e4" stroke="#6a3aa0"/>
                        <path d="M310 870v34M326 880v22M374 880v22M390 870v34" stroke="#c9a060" stroke-width="4"/>
                        <path d="M257 850h187" stroke="#333" stroke-width="2"/>
                        <g fill="#252a90"><circle cx="338" cy="811" r="6"/><circle cx="362" cy="811" r="6"/><circle cx="340" cy="878" r="6"/><circle cx="364" cy="878" r="6"/></g>
                        <path d="M272 737h188l-20 48H253z" fill="#fff" stroke="#444" stroke-width="2"/>
                        <path d="M253 785h187v20H253z" fill="#cdcdcd" stroke="#444" stroke-width="2"/>
                        <path d="M440 785l20-48v16l-20 52z" fill="#aaa" stroke="#444"/>
                        <ellipse cx="355" cy="760" rx="37" ry="14" fill="#1f6650"/><ellipse cx="355" cy="758" rx="22" ry="7" fill="#4f9a84" stroke="#123"/>
                        <g fill="#23564c"><ellipse cx="316" cy="747" rx="8" ry="3"/><ellipse cx="408" cy="745" rx="8" ry="3"/><ellipse cx="303" cy="777" rx="8" ry="3"/><ellipse cx="394" cy="777" rx="8" ry="3"/></g>
                    </svg>
                    <p>0708.prt，从 F:\2019\</p>
                </div>
            </div>
        </aside>

        <!-- Curve tools -->
        <div class="curves">
            <span class="hgrip"></span>
            <div class="pair"><button class="tb" aria-label="直线和圆弧"><svg viewBox="0 0 26 26"><path d="M4 21L20 5" stroke="#333"/><circle cx="4" cy="21" r="2" fill="#c33"/><circle cx="20" cy="5" r="2" fill="#c33"/></svg></button><button class="dd" aria-label="直线选项"></button></div>
            <button class="tb" aria-label="直线"><svg viewBox="0 0 26 26"><path d="M4 21L20 5" stroke="#333"/><circle cx="4" cy="21" r="2" fill="#c33"/><circle cx="20" cy="5" r="2" fill="#c33"/></svg></button>
            <button class="tb" aria-label="圆弧"><svg viewBox="0 0 26 26"><path d="M4 5q17 0 18 17" stroke="#333" fill="none"/><g fill="#c33"><circle cx="4" cy="5" r="2"/><circle cx="17" cy="9" r="2"/><circle cx="22" cy="21" r="2"/></g></svg></button>
            <button class="tb" aria-label="矩形"><svg viewBox="0 0 26 26"><path d="M3.5 6.5h18v13h-18z" stroke="#333" fill="none" stroke-width="1.3"/><circle cx="3.5" cy="6.5" r="2" fill="#c33"/><circle cx="21.5" cy="19.5" r="2" fill="#c33"/></svg></button>
            <button class="tb" aria-label="艺术样条"><svg viewBox="0 0 26 26"><path d="M4 14l5-9 7 17 7-10" stroke="#999" fill="none"/><path d="M4 14q5-4 8 0t11-2" stroke="#333" fill="none"/><g fill="#999"><circle cx="4" cy="14" r="2"/><circle cx="9" cy="5" r="2"/><circle cx="17" cy="21" r="2"/><circle cx="23" cy="12" r="2"/></g><circle cx="9" cy="12" r="1.8" fill="#c33"/><circle cx="16" cy="16" r="1.8" fill="#c33"/></svg></button>
            <div class="pair"><button class="tb" aria-label="偏置曲线"><svg viewBox="0 0 26 26" fill="none"><path d="M3 22V10l5-5h7l3 3q5 1 4 7-1 7-6 7z" stroke="#333" stroke-width="1.3"/><path d="M6 19v-7l4-4h4l1 3q5 0 4 4-1 4-4 4z" stroke="#c33"/></svg></button><button class="dd" aria-label="偏置曲线选项"></button></div>
            <button class="tb" aria-label="在面上偏置"><svg viewBox="0 0 26 26" fill="none"><path d="M4 22V10l5-5h7l3 3q4 1 3 7-1 7-6 7z" stroke="#333" stroke-width="1.3"/><path d="M7 19v-7l4-4h3l1 3q5 0 4 4-1 4-4 4z" stroke="#c33"/></svg></button>
            <span class="hsep"></span>
            <button class="tb" aria-label="桥接曲线"><svg viewBox="0 0 26 26" fill="none"><path d="M9 3C1 2 1 9 6 9M17 4q2-2 7 1M9 15c-8 0-8 9-2 8" stroke="#333" stroke-width="1.3"/><path d="M9 5v12M18 6v12" stroke="#333" stroke-dasharray="1 1"/><path d="M7 23q5 0 9-5 4-3 8-1" stroke="#c33"/><path d="M12 9h3v4h2l-3 4-4-4h2z" fill="#f0a050" stroke="#b5651a" stroke-width=".5"/></svg></button>
            <button class="tb" aria-label="投影曲线"><svg viewBox="0 0 26 26"><path d="M2 17q5-3 9-7 6 4 13 5-6 4-9 8-7-2-13-6z" fill="#ccd8ec" stroke="#667"/><path d="M7 2l14 3" stroke="#2a3fb8" stroke-width="1.4"/><path d="M14 4v8" stroke="#333"/><path d="M12 10h4l-2 4z" fill="#333"/><path d="M9 15q4 0 7 4" stroke="#d3532a" fill="none" stroke-width="1.4"/></svg></button>
            <button class="tb" aria-label="组合投影"><svg viewBox="0 0 26 26" fill="none"><path d="M2 9v12M2 11q8 1 10 11" stroke="#333a98" stroke-width="1.3"/><path d="M2 9q14 1 15 14" stroke="#c33" stroke-width="1.5"/><path d="M8 9v14" stroke="#333" stroke-dasharray="2 2"/><circle cx="12" cy="17" r="3" stroke="#333a98"/><path d="M17 11V7h-3l5-6 5 6h-3v4z" fill="#2f9150" stroke="#1a6a36"/></svg></button>
            <button class="tb" aria-label="镜像曲线"><svg viewBox="0 0 26 26"><path d="M2 4l6 3v15l-6-3z" fill="#ecebe0" stroke="#888"/><path d="M9 7l10-6v18L9 25z" fill="#ffe9a0" stroke="#c99a2a"/><path d="M14 11h4V7l6-1v14l-10 2z" fill="#fbe2dc" stroke="#c55" opacity=".9"/><circle cx="18" cy="16" r="2.5" fill="none" stroke="#c55"/></svg></button>
            <button class="tb" aria-label="相交曲线"><svg viewBox="0 0 26 26"><path d="M9 2l8 3v19l-8-3z" fill="#c9d8ee" stroke="#778"/><path d="M2 10q6 0 9-1 6 4 13 6-6 1-9 4-6-5-13-9z" fill="#b5cbe8" stroke="#667" opacity=".9"/><path d="M7 9q7 2 12 9" stroke="#d3532a" fill="none" stroke-width="1.6"/></svg></button>
            <button class="tb" aria-label="等参数曲线"><svg viewBox="0 0 26 26"><path d="M3 9Q8 3 14 2q4 4 9 6-5 4-8 9-6-4-12-8z" fill="#cdd5f6" stroke="#3a3aa0" stroke-width="1.3"/><path d="M6 11l10-8M10 14l9-9M8 5q6 4 10 8M5 7q6 4 11 9" stroke="#3a3aa0" fill="none"/><path d="M10 20q-4-2-6-7l-1 3M17 20q5-2 6-7l1 3" stroke="#222" fill="none" stroke-width="1.3"/><path d="M2 19l2 5 2-5M20 19v5h3v-5" stroke="#222" fill="none"/></svg></button>
            <button class="tb" aria-label="缠绕曲线"><svg viewBox="0 0 26 26"><path d="M2 6v15q4 3 11 0V6z" fill="url(#gBlueH)" stroke="#5566aa"/><path d="M2 6q5 3 11 0V3H7v3" fill="#d6e0ff" stroke="#5566aa"/><path d="M14 13h4v-2l4 3-4 3v-2h-4z" fill="#e0762c"/><path d="M20 4q7 9 0 18" stroke="#c33" fill="none" stroke-width="1.3"/></svg></button>
            <button class="leftmore" aria-label="更多曲线"></button>
            <span class="hgrip second"></span>
            <button class="tb" aria-label="修剪曲线"><svg viewBox="0 0 26 26" fill="none"><path d="M2 12h22M6 3q10-1 12 9" stroke="#333" stroke-width="1.4"/><path d="M18 12q-2 7-9 7-5 1-7 4" stroke="#777" stroke-dasharray="2 1"/><path d="M13 7l10 11" stroke="#c33" stroke-width="1.4"/></svg></button>
            <button class="tb" aria-label="修剪拐角"><svg viewBox="0 0 26 26" fill="none"><path d="M2 12h14v13" stroke="#333" stroke-width="1.4"/><path d="M16 2v10h8" stroke="#555" stroke-dasharray="1 1"/><path d="M11 7l10 10" stroke="#c33" stroke-width="1.4"/></svg></button>
            <button class="tb" aria-label="分割曲线"><svg viewBox="0 0 26 26" fill="none"><path d="M2 22q10 2 11-8 1-10 11-10" stroke="#333" stroke-width="1.4"/><path d="M11 5l8 8M8 15l8 8" stroke="#c33" stroke-width="1.3"/></svg></button>
            <button class="tb" aria-label="曲线长度"><svg viewBox="0 0 26 26" fill="none"><path d="M2 22q11 1 14-10" stroke="#333" stroke-width="1.4"/><path d="M16 12V4M22 5v11M20 7l2-3 2 3M20 14l2 3 2-3" stroke="#c33" stroke-width="1.3"/></svg></button>
            <button class="leftmore" aria-label="更多编辑曲线"></button>
        </div>

        <!-- Graphics window -->
        <section class="canvas">
            <svg class="mold" viewBox="0 0 840 960" stroke="#222" stroke-width="2">
                <!-- right side plates -->
                <path d="M706 150l28 290-70 90-28-90z" fill="#a077bd" stroke="none"/>
                <path d="M636 440l68-280 10 125-53 258z" fill="#a06bc8" stroke="#534"/>
                <path d="M660 543l54-258 22 250-48 285z" fill="#c39490" stroke="#534"/>
                <path d="M661 545l22-63h48l-50 205z" fill="#cf9c98" stroke="#655"/>
                <ellipse cx="678" cy="350" rx="5" ry="18" fill="none" stroke="#534"/>
                <path d="M675 455q14-30 28 0v45q-12 14-25 0z" fill="#b08080" stroke="#755"/>
                <path d="M683 690l52-235 6 70 17 8v42l-71 322-2-50 4-30z" fill="#dcdce0" stroke="#555"/>
                <path d="M710 490l20-20v75l-26 5z" fill="#777" stroke="none"/>
                <path d="M697 570l32-24-34 160-12-30z" fill="#9fe0f5" stroke="#246"/>
                <path d="M729 546l6 40-38 160-6-30z" fill="#c79bd8" stroke="#446"/>
                <path d="M728 545l-30 150" stroke="#2b67b8" stroke-width="6"/>
                <path d="M685 850l71-320M688 820l54-295" stroke="#333" fill="none"/>
                <!-- A plate -->
                <path d="M92 445h545l24 98H103z" fill="#8b62ab"/>
                <path d="M128 445h507l8 45H145z" fill="#7d76a8" stroke="#534"/>
                <path d="M92 445h36l-24 90z" fill="#7a62b8" stroke="#534"/>
                <path d="M205 450h58v35h-40zM524 450h45v40h-35zM292 448q30 20 62 0M446 448q30 20 62 0" fill="#9b93c4" stroke="#446"/>
                <path d="M222 452h32v28h-32zM534 452h32v28h-32z" fill="#aab0c8" stroke="#557"/>
                <path d="M103 543l40-53h505l13 53z" fill="#8f539f" stroke="#534"/>
                <path d="M240 493v48M270 493v48M300 493v48M330 493v48M420 493v48M450 493v48M480 493v48M530 493v48" stroke="#965ba6"/>
                <!-- B plate -->
                <path d="M103 543h558l14 148H120z" fill="#ad7f78"/>
                <path d="M150 543h504l10 97H140z" fill="#a68f89" stroke="#755"/>
                <path d="M120 691l22-50h522l11 50z" fill="#bd857e" stroke="#855"/>
                <ellipse cx="225" cy="570" rx="34" ry="24" fill="#a06e6c" stroke="none"/>
                <path d="M190 545h32v80q-14 14-32 0z" fill="#9c6668" stroke="#755"/>
                <path d="M645 545h20v85q-10 12-20 0z" fill="#8f6468" stroke="#755"/>
                <!-- guide pillars -->
                <path d="M130 447h64v76q-30 16-64 0zM582 447h62v76q-30 16-62 0z" fill="#565873" stroke="#334"/>
                <path d="M150 543h46l10 120q-26 20-54 0zM600 543h42l14 120q-26 20-54 0z" fill="#524e78" stroke="#334"/>
                <path d="M160 545l6 110M612 545l4 110" stroke="#7d7fae" stroke-width="5"/>
                <ellipse cx="180" cy="663" rx="28" ry="14" fill="#5f4754"/><ellipse cx="629" cy="663" rx="28" ry="14" fill="#5f4754"/>
                <!-- ejector pins -->
                <path d="M336 545v35M346 545v88M372 560v70M386 545v40M452 545v45M466 545v92M486 545v94M504 545v50M512 600v38" stroke="#8f4a58" stroke-width="6"/>
                <path d="M358 545h22l-14 68h-24zM410 545h28v60h-30z" fill="#7a5fb8" stroke="#446"/>
                <path d="M286 545h22l6 55q-12 12-28 0zM522 545h22l4 50q-12 12-28 0z" fill="#8f8a52" stroke="#553"/>
                <circle cx="353" cy="615" r="14" fill="#1a2296" stroke="#114"/><circle cx="420" cy="615" r="14" fill="#1a2296" stroke="#114"/>
                <path d="M245 602q14-12 28 0l5 66q-16 8-30 0zM520 602q16-12 30 0l4 66q-14 8-30 0z" fill="#b06a45" stroke="#633"/>
                <ellipse cx="259" cy="603" rx="14" ry="7" fill="#e09a6c"/><ellipse cx="535" cy="603" rx="14" ry="7" fill="#e09a6c"/>
                <path d="M103 543h558" stroke-width="4"/>
                <!-- lower blocks -->
                <path d="M120 691h556l12 130H132z" fill="#6e6e6e"/>
                <path d="M132 820h556l-8 34H126z" fill="#fff"/>
                <path d="M125 853h556l5 45H130z" fill="#6b6b6b"/>
                <path d="M130 846h22v4h-22zM134 836l6 6" fill="#111"/>
                <!-- top clamp plate -->
                <path d="M150 75l556 1-74 325H77z" fill="#fff"/>
                <path d="M77 401h555l4 45H80z" fill="#6f6f6f"/>
                <path d="M632 401l74-325 5 50-75 320z" fill="#d7d7da"/>
                <ellipse cx="671" cy="262" rx="4" ry="10" fill="none"/>
                <g fill="#3d94c4" stroke="#124">
                    <ellipse cx="275" cy="137" rx="26" ry="16"/><ellipse cx="551" cy="138" rx="26" ry="16"/><ellipse cx="230" cy="339" rx="26" ry="16"/><ellipse cx="506" cy="340" rx="26" ry="16"/>
                </g>
                <g fill="#12446f" stroke="#124">
                    <ellipse cx="275" cy="137" rx="15" ry="10"/><ellipse cx="551" cy="138" rx="15" ry="10"/><ellipse cx="230" cy="339" rx="15" ry="10"/><ellipse cx="506" cy="340" rx="15" ry="10"/>
                </g>
                <!-- locating ring -->
                <path d="M278 222v22q14 54 111 58 97-4 112-60v-22z" fill="#12633f"/>
                <ellipse cx="389" cy="222" rx="112" ry="67" fill="#2ea67a"/>
                <ellipse cx="388" cy="221" rx="79" ry="46" fill="#155c40"/>
                <path d="M318 242q26-38 70-38t68 38q-28 25-68 25t-70-25z" fill="#c9c9c9" stroke="none"/>
                <path d="M338 256q50-34 90 0-40 18-90 0z" fill="#d58fdc" stroke="none"/>
                <ellipse cx="401" cy="164" rx="13" ry="8" fill="#222"/><ellipse cx="376" cy="275" rx="13" ry="10" fill="#222"/>
                <path d="M408 246h18l-18 24h20M452 246q-22-4-20 14 4 14 20 12" fill="none" stroke="#164fd0" stroke-width="3"/>
                <!-- work coordinate system -->
                <path d="M388 282l16 6 5 60-1 55-14-55z" fill="#4b6cb8" stroke="#2c468c"/>
                <path d="M422 412l100-9 54 9-54 6z" fill="#a5dba5" stroke="#6fae74"/>
                <path d="M408 418l-6 60-12 34-6-32z" fill="#f0a192" stroke="#b8685f"/>
                <path d="M398 514l16 22M414 514l-16 22M438 514q-18 0-16 12 2 10 16 8" stroke="#e02a2a" stroke-width="3" fill="none"/>
                <path d="M542 424l8 12 8-12M550 436v10M578 424q-16 0-14 12 2 10 14 8" stroke="#2f9a3a" stroke-width="3" fill="none"/>
            </svg>

            <svg class="screws" viewBox="0 0 360 540" stroke="#222" stroke-width="3">
                <path d="M186 215v170q14 12 26-4V215z" fill="#55a869" stroke="#375"/>
                <path d="M165 290v115q12 10 20 0V290zM150 320v92q10 8 16 0v-92zM138 350v94q10 10 20 0v-60z" fill="#4ea263" stroke="#264"/>
                <path d="M190 250h22v60q-12 10-25 6z" fill="#bfc3bf" stroke="#777"/>
                <path d="M135 213v45q34 22 74-4v-41z" fill="url(#gSteel)"/><ellipse cx="171" cy="212" rx="37" ry="20" fill="#eee"/><ellipse cx="171" cy="212" rx="24" ry="12" fill="#fff" stroke="#888"/>
                <path d="M126 280v34q28 18 58-2v-32z" fill="url(#gSteel)"/><ellipse cx="154" cy="279" rx="29" ry="17" fill="#f4f4f4"/><ellipse cx="154" cy="279" rx="18" ry="9" fill="#fff" stroke="#888"/>
                <path d="M124 318v24q20 14 44-2v-22z" fill="url(#gSteel)"/><ellipse cx="146" cy="317" rx="22" ry="12" fill="#f4f4f4"/><ellipse cx="146" cy="317" rx="12" ry="6" fill="#fff" stroke="#888"/>
                <path d="M118 358v22q18 12 38-2v-20z" fill="url(#gSteel)"/><ellipse cx="137" cy="357" rx="19" ry="11" fill="#f4f4f4"/><ellipse cx="137" cy="357" rx="9" ry="5" fill="#fff" stroke="#666"/>
                <path d="M115 384v18q16 10 33-2v-16z" fill="url(#gSteel)"/><ellipse cx="131" cy="383" rx="16" ry="9" fill="#f4f4f4"/><ellipse cx="131" cy="383" rx="7" ry="4" fill="#fff" stroke="#666"/>
                <path d="M110 425v50q10 14 22 4v-50z" fill="#458f5a"/>
                <ellipse cx="123" cy="422" rx="11" ry="7" fill="#ddd"/><ellipse cx="118" cy="438" rx="10" ry="6" fill="#ddd"/><ellipse cx="116" cy="453" rx="9" ry="6" fill="#ddd"/><ellipse cx="119" cy="467" rx="9" ry="6" fill="#bcd"/>
                <ellipse cx="147" cy="444" rx="11" ry="6" fill="#256b3a"/>
                <path d="M182 140h22v30l-22 6z" fill="#4ea263"/>
                <ellipse cx="199" cy="83" rx="10" ry="7" fill="#ccc"/><path d="M199 90v8"/>
                <ellipse cx="194" cy="108" rx="20" ry="13" fill="#f4f4f4"/><ellipse cx="194" cy="108" rx="7" ry="4" fill="#ccc"/>
                <ellipse cx="187" cy="134" rx="16" ry="9" fill="#f4f4f4"/><ellipse cx="184" cy="149" rx="12" ry="8" fill="#f4f4f4"/><ellipse cx="187" cy="134" rx="6" ry="3" fill="#888"/>
            </svg>

            <svg class="triad" viewBox="0 0 390 330" fill="none">
                <path d="M174 114h74l9 62-9 47h-80l-7-65z" fill="#d7d5da" stroke="#90707a" stroke-width="2"/>
                <path d="M162 160h77l9-46M239 160l8 63" stroke="#90707a" stroke-width="2"/>
                <path d="M176 180h82" stroke="#8ab98f" stroke-width="5"/><path d="M176 180l-9 45" stroke="#e8a9a9" stroke-width="4"/><path d="M178 165l-4-52" stroke="#a9b0dc" stroke-width="5"/>
                <circle cx="178" cy="180" r="10" fill="#c8c8cc"/>
                <path d="M258 178h20" stroke="#2d8a3c" stroke-width="5"/><path d="M276 168l34 11-34 10z" fill="#2d8a3c"/>
                <path d="M170 118v-15" stroke="#1838c0" stroke-width="5"/><path d="M160 106l8-38 11 38z" fill="#1838c0"/>
                <path d="M165 220v12" stroke="#e03030" stroke-width="5"/><path d="M157 226l18 6-12 22z" fill="#e03030"/>
                <g class="axis"><text x="157" y="70" fill="#2346c8">Z</text><text x="315" y="191" fill="#55715c">Y</text><text x="149" y="276" fill="#e03a30">X</text></g>
            </svg>

            <svg class="cursor" viewBox="0 0 360 300">
                <circle cx="171" cy="156" r="88" fill="#b2bc1e"/>
                <circle cx="172" cy="157" r="43" fill="none" stroke="#fff" stroke-width="4"/>
                <circle cx="172" cy="157" r="45" fill="none" stroke="#111" stroke-width="3" stroke-dasharray="50 20.7" stroke-dashoffset="-10"/>
                <path d="M172 111v93M126 157h93" stroke="#111" stroke-width="10"/>
                <path d="M172 114v87M129 157h87" stroke="#fff" stroke-width="4"/>
            </svg>

            <button class="bubble">18</button>
        </section>
    </main>

    <!-- Bottom toolbar -->
    <footer class="bottom">
        <div class="toolbar end">
            <span class="grip"></span>
            <button class="tb" aria-label="绝对坐标"><svg viewBox="0 0 26 26" fill="none"><path d="M4 6l5-4-1 5z" fill="#eda145"/><path d="M14 2v8l8 2M14 10l-4 4" stroke="#cf4343" stroke-width="1.5"/><path d="M4 12v9l5 3M4 21l6-7" stroke="#3a7abf" stroke-width="1.5"/><text x="7" y="24" class="abs">ABS</text></svg></button>
            <button class="tb" aria-label="表达式"><svg viewBox="0 0 26 26"><path d="M4 2l12 13M15 2L4 15" stroke="#444" stroke-width="2.4"/><path d="M20 2v14M18 2h4M18 16h4M3 19h14M3 17v4M17 17v4" stroke="#555"/><path d="M23 7l2 3M25 7l-2 3M9 21l3 4M12 21l-3 4" stroke="#c33"/></svg></button>
            <button class="tb" aria-label="图层"><svg viewBox="0 0 26 26" fill="#eee" stroke="#888"><path d="M5 8l5-5h12l-5 5zM5 13l4-4h12l-5 4zM5 18l4-4h10l-4 4z"/><path d="M4.5 11.5h8v3h-8zM4.5 16.500h8v3h-8zM13.500 9.500h8v14h-8zM15 13h5M15 16h5M15 19h5"/></svg></button>
            <button class="tb" aria-label="上一步"><svg viewBox="0 0 26 26"><path d="M3 13l8-8v4h11v8H11v4z" fill="url(#gArrow)" stroke="#6a6ab0"/></svg></button>
            <button class="tb" aria-label="下一步"><svg viewBox="0 0 26 26"><path d="M22 13l-8-8v4H3v8h11v4z" fill="url(#gArrow)" stroke="#6a6ab0"/></svg></button>
            <button class="tb" aria-label="替换显示"><svg viewBox="0 0 26 26"><path d="M6 13l7-8 7 7-8 9z" fill="#e7e7fb" stroke="#44448c"/><path d="M13 8l4 5-5 5-3-5z" fill="#5454a0"/><path d="M15 3q6-2 9-1v5l-3-3M16 6q3 1 5 5M11 24q-7 1-9 1v-6l3 3M5 16q0 4 6 5" fill="none" stroke="#4f83c0" stroke-width="2"/></svg></button>
            <button class="tb" aria-label="移动对象"><svg viewBox="0 0 26 26"><path d="M13.5 3.5h9v8h-9zM3.5 15.500h10v8h-10z" fill="#ececec" stroke="#888"/><path d="M12 8l-5 1 1 2-3 3 6 0 1-1z" fill="#eda145"/></svg></button>
            <button class="tb" aria-label="凸台"><svg viewBox="0 0 26 26"><path d="M9 9h8v9h7v6H2v-6h7z" fill="#7f93e0" stroke="#3c4a94"/><path d="M13 8V3M7 6l4-3M13 3l6 3M11 4l2-2 2 2" stroke="#c33" fill="none"/></svg></button>
            <button class="tb" aria-label="测量体"><svg viewBox="0 0 26 26"><path d="M2 9l8-4 8 3v8H2z" fill="url(#gPurple)" stroke="#7a4a98"/><path d="M2 9l8 2 8-3M10 11v6" stroke="#7a4a98" fill="none"/><path d="M2.5 18.5h22v5h-22z" fill="#ffe07a" stroke="#b18c22"/><path d="M6 19v2M10 19v2M14 19v2M18 19v2" stroke="#775c11"/><path d="M14 3l8 3v10" stroke="#c33" fill="none" stroke-dasharray="2 1"/></svg></button>
            <button class="tb" aria-label="包容体"><svg viewBox="0 0 26 26"><path d="M1.5 6.5l5-5h17v17l-5 6h-17zM1.5 6.5h17v17M18.5 6.5l5-5" fill="none" stroke="#222" stroke-width="1.3"/><path d="M5 9l7-4 7 3v11l-7 3-7-4z" fill="#b27be0" stroke="#7a3fb0"/><path d="M5 9l7 2 7-3-7-3z" fill="#dcb8f8"/></svg></button>
            <button class="tb" aria-label="半径"><svg viewBox="0 0 26 26" fill="none"><path d="M2 17q8 11 16 3 3-4 2-9" stroke="#c33" stroke-width="1.5"/><path d="M6 5l5 13" stroke="#777"/><path d="M11 11V2h4q2 0 2 2t-2 3h-4M14 7l3 4" stroke="#4a3fb0" stroke-width="1.7"/></svg></button>
            <button class="tb" aria-label="线框"><svg viewBox="0 0 26 26" fill="none" stroke="#666"><path d="M2 9l11-6 11 6-11 7zM6 9l7-3 7 3-7 4zM2 9v7l11 7 11-7V9M13 16v7M6 9v5l7 4 7-4V9"/><path d="M7 19v5" stroke="#c33"/></svg></button>
            <button class="tb" aria-label="抽壳"><svg viewBox="0 0 26 26"><path d="M3 17l8-5 12 1-4 10q-9 3-16-1z" fill="url(#gBlue)" stroke="#4a78b8"/><path d="M5 3h17l-3 4H9z" fill="#f3d19a" stroke="#b98a44"/><path d="M13 15V4M11 7l2-3 2 3" stroke="#b33" fill="none" stroke-width="1.5"/></svg></button>
            <button class="tb" aria-label="拔模分析"><svg viewBox="0 0 26 26"><path d="M2 15L13 3l11 6-11 12z" fill="#f7c83c"/><path d="M6 15l11-11M10 18l12-11" stroke="#e8502c" stroke-width="2.5"/><path d="M2 15l11 6 11-12v4L13 24 2 18z" fill="#555c3a"/></svg></button>
            <button class="tb" aria-label="对象信息"><svg viewBox="0 0 26 26"><path d="M4.5 1.5h11v9h-11z" fill="#dfe1fa" stroke="#33348e"/><path d="M10 3v1.500M10 6v3" stroke="#22236f" stroke-width="2"/><path d="M2 14l8-3 8 3v8l-8 3-8-4z" fill="#a9c0f5" stroke="#4e66b0"/><path d="M2 14l8 2 8-2M10 16v8" fill="none" stroke="#4e66b0"/><path d="M15 12l9-7M15 12h6" stroke="#c33"/></svg></button>
            <button class="tb" aria-label="替换组件"><svg viewBox="0 0 26 26"><path d="M2 15v8q5 3 9 0v-8z" fill="url(#gBlueH)" stroke="#5a70b8"/><path d="M12 5v18l12-3V3q-6-3-12 2z" fill="url(#gBlueH)" stroke="#5a70b8"/><path d="M3 11q0-6 6-5l-1-2 4 3-4 4v-2q-3 0-5 2z" fill="#eda145"/></svg></button>
            <button class="tb" aria-label="红色实体"><svg viewBox="0 0 26 26"><path d="M2.5 6.5l4-4h17v16l-4 5h-17zM2.5 6.5h17v17M19.5 6.5l4-4" fill="#eee" stroke="#777"/><path d="M6 10l6-3 6 3v8l-6 3-6-3z" fill="#d42a22"/><path d="M6 10l6-3 6 3-6 3z" fill="#f58a80"/></svg></button>
            <button class="tb" aria-label="分型"><svg viewBox="0 0 26 26"><path d="M7 7l8-5v18l-8 4z" fill="#f2a5b5" stroke="#c96a80"/><path d="M2 14l5-1v8l-5-2zM12 15l6-3 6 2v6l-6 3-6-2z" fill="#e4f0ec" stroke="#8aa8a2"/></svg></button>
            <button class="tb" aria-label="拆分体"><svg viewBox="0 0 26 26"><path d="M2 13l4-4h18v9l-4 5H2z" fill="#94bfe6" stroke="#4a78b8"/><path d="M2 13h18v10M20 13l4-4" fill="none" stroke="#4a78b8"/><path d="M13 1v22" stroke="#c33" stroke-width="1.3"/><path d="M11 4H7M15 4h4" stroke="#e0902c" stroke-width="2"/><path d="M7 1v6L4 4zM19 1v6l3-3z" fill="#e0902c"/></svg></button>
            <button class="tb" aria-label="修剪体积"><svg viewBox="0 0 26 26"><path d="M3 12l4-3h15v7l-4 4H3z" fill="#a9cbea" stroke="#4a78b8"/><path d="M3 12h15v8" fill="none" stroke="#4a78b8"/><path d="M12 2v22M9 4h6M9 22h6" fill="none" stroke="#b55"/></svg></button>
            <button class="tb" aria-label="矩形"><svg viewBox="0 0 26 26"><path d="M5.5 7.5h14v12h-14z" fill="none" stroke="#4a4a94" stroke-width="1.4"/><path d="M4 6h3v3H4zM18 18h3v3h-3z" fill="#4a4a94"/></svg></button>
            <button class="dd" aria-label="矩形选项"></button>
            <button class="tb" aria-label="多边形"><svg viewBox="0 0 26 26"><path d="M8 4h10l4 9-4 9H8L4 13z" fill="none" stroke="#6666a8" stroke-width="1.3"/></svg></button>
            <button class="dd" aria-label="多边形选项"></button>
            <button class="tb" aria-label="坐标系"><svg viewBox="0 0 26 26" fill="none" stroke-width="1.5"><path d="M4 17V3M2 6l2-4 2 4" stroke="#2346c8"/><path d="M4 17l13-6M14 10h4l-2 3" stroke="#2d8a3c"/><path d="M4 17l13 5M14 19l3 3-4 1" stroke="#d33"/><path d="M8 2h4l-4 5h4M19 6l2 3 2-3M21 9v3M19 19l4 5M23 19l-4 5" stroke="#333" stroke-width="1.2"/></svg></button>
            <button class="tb" aria-label="中心标记"><svg viewBox="0 0 26 26"><path d="M4.5 5.5h16v16h-16z" fill="#f4a5a5" stroke="#c55"/><path d="M13 2v22M2 13h22" stroke="#c33" stroke-dasharray="7 2"/></svg></button>
            <button class="tb" aria-label="孔"><svg viewBox="0 0 26 26"><path d="M3.5 3.5h19v18h-19z" fill="#fff" stroke="#cf7a2c"/><circle cx="13" cy="12.5" r="5.5" fill="none" stroke="#6a35c8" stroke-width="2.2"/></svg></button>
            <button class="tb" aria-label="文本"><svg viewBox="0 0 26 26"><text x="4" y="22" class="txt" transform="rotate(-25 4 22)">Text</text><path d="M10 8l2-7 4 3-4 5z" fill="#f5c93a" stroke="#a57c12"/></svg></button>
            <button class="tb" aria-label="虚线体"><svg viewBox="0 0 26 26"><path d="M5 4l11-1 5 8-11 1z" fill="#f8dcdc" stroke="#c55"/><path d="M5 4v10l5 8h11V11M10 12v10" fill="none" stroke="#777" stroke-dasharray="2 1"/></svg></button>
            <button class="tb" aria-label="聚光灯"><svg viewBox="0 0 26 26"><path d="M3 3l9-1 8 9-9 5z" fill="#5b7048"/><path d="M9 14l10-4 5 6q-4 7-12 7z" fill="#eef2e0" stroke="#999"/><path d="M11 13l5-3 2 2-6 4z" fill="#e8cf4a"/></svg></button>
            <button class="tb" aria-label="圆"><svg viewBox="0 0 26 26"><circle cx="13" cy="13" r="8.5" fill="none" stroke="#666" stroke-width="1.6"/></svg></button>
            <button class="more" aria-label="更多工具"></button>
        </div>
        <!-- Input method bar -->
        <div class="ime">
            <svg class="sogou" viewBox="0 0 28 28"><path d="M1 4l22-3q3 0 3 3l1 19q0 3-3 3L5 28z" fill="#ee5a22"/><path d="M21 8q-14-4-14 2 1 4 8 3 6 1 4 5-4 4-14 1" fill="none" stroke="#fff" stroke-width="3.5"/></svg>
            <button class="zh">中</button>
            <button aria-label="半角"><svg viewBox="0 0 16 16"><path d="M10 2q3 9-9 9 5 5 10 2 6-5-1-11z" fill="#1f6fc4"/></svg></button>
            <button aria-label="标点"><svg viewBox="0 0 16 16"><circle cx="4" cy="5" r="2" fill="none" stroke="#1f6fc4" stroke-width="1.4"/><path d="M9 8q4-2 4 2 0 3-3 4 1-2 0-3-2-1-1-3z" fill="#1f6fc4"/></svg></button>
            <button aria-label="软键盘"><svg viewBox="0 0 16 16"><path d="M.8 2.8h14.4v10.400H.8z" fill="#fff" stroke="#1f6fc4" stroke-width="1.6"/><path d="M3 6h10M3 8.500h10" stroke="#1f6fc4" stroke-width="1.5" stroke-dasharray="1.5 1"/><path d="M4 11h8" stroke="#1f6fc4"/></svg></button>
            <button aria-label="用户"><svg viewBox="0 0 16 16"><circle cx="6" cy="4" r="3" fill="#c3c6d0"/><path d="M0 14q0-6 6-6t6 6z" fill="#c3c6d0"/><path d="M6.5 8.5h9v6h-9z" fill="#fff" stroke="#c3c6d0"/><path d="M9 10v3M12 10v2h2v-2M14 10v4" stroke="#b5b8c4" fill="none"/></svg></button>
            <button aria-label="皮肤"><svg viewBox="0 0 16 16"><path d="M5 1q3 2 6 0l5 3-2 4-2-1v8H4V7L2 8 0 4z" fill="#1f6fc4"/></svg></button>
            <button aria-label="工具箱"><svg viewBox="0 0 16 16"><path d="M1 13l7-6q-1-5 4-6l-1 3 2 2 2-2q1 5-5 6l-6 6q-3 1-3-3z" fill="#1f6fc4"/></svg></button>
        </div>
        <span class="dock"></span>
    </footer>
</div>

</body>
</html>
```

FILE: styles.css
```css
* {
    box-sizing: border-box;
}
body {
    margin: 0;
    padding: 20px 0;
    height: 100vh;
    background-color: #000;
    color: #1c1c1c;
    font-family: "Open Sans", "Noto Sans CJK SC", sans-serif;
    font-size: 12px;
    overflow: hidden;
}
button, input, select {
    font: inherit;
    color: inherit;
    border: none;
    padding: 0;
    margin: 0;
    background: none;
}
button {
    display: flex;
    align-items: center;
    justify-content: center;
    flex: none;
}
h1, h2, h3, p {
    margin: 0;
    font-size: 12px;
    font-weight: normal;
}
.defs {
    position: absolute;
    width: 0;
    height: 0;
}
.app {
    display: flex;
    flex-direction: column;
    height: 100%;
    background-color: #fff;
}

/* Title bar and menu */
.titlebar {
    display: flex;
    align-items: center;
    height: 30px;
    padding: 0 2px 2px 3px;
}
.logo {
    width: 39px;
    font-size: 21px;
    font-weight: bold;
    color: #8799a8;
    border-right: 1px solid #ddd;
}
.title {
    flex: 1;
    padding-left: 4px;
    color: #000;
}
.brand {
    margin-right: 20px;
    font-size: 14px;
    font-weight: bold;
    color: #0d8486;
}
.winbtns {
    display: flex;
}
.winbtns button {
    width: 24px;
    height: 24px;
}
.winbtns svg {
    width: 16px;
    height: 16px;
    fill: none;
    stroke: #555;
}
.winbtns.dark {
    margin-left: auto;
    padding-right: 2px;
}
.winbtns.dark svg {
    stroke: #111;
}
.menubar {
    display: flex;
    align-items: center;
    height: 31px;
    padding-bottom: 3px;
    background-color: #c6d5d5;
    font-size: 15px;
    color: #1d2a2a;
}
.menubar > button {
    margin-right: 15px;
    white-space: pre;
}
.menubar > button.wide {
    margin-right: 22px;
}
.menuicon {
    width: 16px;
    height: 16px;
    margin: 0 6px 0 1px;
}

/* Toolbars */
.row {
    display: flex;
    flex: none;
}
.row1 {
    height: 36px;
    padding-left: 2px;
}
.row2 {
    height: 34px;
    padding-left: 46px;
}
.row3 {
    height: 37px;
    padding-left: 5px;
    align-items: center;
    border-bottom: 2px solid #919191;
}
.toolbar {
    display: flex;
    align-items: center;
    border-bottom: 1px solid #dedede;
}
.toolbar.end {
    border-right: 1px solid #dedede;
}
.toolbar.gap {
    margin-left: 29px;
}
.grip {
    flex: none;
    width: 7px;
    height: 26px;
    background: radial-gradient(circle, #aaa 1px, transparent 2px) 0 0 / 7px 5px;
}
.tb {
    width: 31px;
    height: 31px;
}
.tb svg {
    width: 26px;
    height: 26px;
}
.on {
    background-color: #c6d7d6;
    border: 1px solid #a8bcbb;
}
.sep {
    flex: none;
    width: 1px;
    height: 28px;
    margin: 0 2px 0 3px;
    background-color: #ddd;
}
.sep.wider {
    margin-right: 4px;
}
.sep.clear {
    background-color: transparent;
}
.dd, .more {
    width: 12px;
    height: 30px;
}
.more {
    width: 14px;
    padding-top: 16px;
}
.dd::before, .more::before {
    content: "";
    border: 3px solid transparent;
    border-top: 4px solid #111;
    border-bottom: none;
}
.start {
    width: 62px;
    height: 30px;
    gap: 3px;
    font-size: 15px;
}
.start svg {
    width: 26px;
    height: 26px;
}
.search {
    display: flex;
    align-items: center;
    width: 171px;
    height: 24px;
    margin: 0 4px;
    border: 1px solid #999;
}
.search input {
    flex: 1;
    min-width: 0;
    padding-left: 2px;
    font-size: 15px;
}
.search svg {
    width: 16px;
    height: 16px;
    margin-right: 4px;
}
.sb {
    width: 23px;
    height: 23px;
}
.sb.tight {
    width: 21px;
}
.sb svg {
    width: 20px;
    height: 20px;
}
.row3 .dd {
    width: 12px;
}
.row3 .corner {
    margin: 14px 3px 0 auto;
}
.combo {
    display: flex;
    align-items: center;
    height: 24px;
    border: 1px solid #999;
    font-size: 15px;
}
.combo select {
    flex: 1;
    min-width: 0;
    padding-left: 2px;
    appearance: none;
    outline: none;
}
.combo::after {
    content: "";
    margin-right: 4px;
    border: 4px solid transparent;
    border-top: 5px solid #111;
    border-bottom: none;
}
.filter {
    width: 177px;
    margin-right: 8px;
}
.scope {
    width: 188px;
    margin-right: 3px;
}
.strip {
    display: flex;
    justify-content: flex-end;
    align-items: center;
    flex: none;
    height: 22px;
    gap: 4px;
    padding: 0 39px 2px 0;
}
.strip svg {
    display: block;
    width: 16px;
    height: 16px;
}

/* Work area */
.work {
    display: flex;
    flex: 1;
    min-height: 0;
}
.resbar {
    display: flex;
    flex-direction: column;
    flex: none;
    width: 32px;
    background-color: #dadada;
    border-right: 1px solid #a5a5a5;
}
.resbar button {
    height: 42px;
    padding-left: 4px;
}
.resbar .gear {
    height: 26px;
    margin-bottom: 16px;
    padding: 0 2px 0 0;
}
.resbar .spaced {
    margin-top: 12px;
}
.resbar .on {
    margin-left: 2px;
    margin-right: -1px;
    padding-left: 0;
    background-color: #fff;
    border-right: none;
}
.resbar svg {
    width: 24px;
    height: 24px;
}
.resbar .gear svg {
    width: 14px;
    height: 14px;
}
.panel {
    display: flex;
    flex-direction: column;
    flex: none;
    width: 146px;
    padding: 0 9px 6px 6px;
}
.panelhead {
    display: flex;
    align-items: center;
    justify-content: space-between;
    height: 30px;
    padding: 0 7px 0 4px;
}
.panelhead button {
    width: 12px;
    height: 11px;
    border: 1px solid #111;
    border-top-width: 2px;
}
.paneltools {
    display: flex;
    align-items: center;
    gap: 9px;
    height: 34px;
    padding: 0 0 3px 5px;
}
.paneltools .dd {
    margin-left: -4px;
}
.combo.small {
    width: 50px;
}
.paneltools svg {
    width: 18px;
    height: 16px;
}
.paneltools .pic {
    width: 22px;
    height: 20px;
}
.tree {
    flex: 1;
    min-height: 0;
    border: 1px solid #d2d2d2;
    overflow: hidden;
}
.tree button {
    height: 25px;
    padding-left: 6px;
    gap: 5px;
}
.tree button svg {
    width: 15px;
    height: 13px;
}
.card {
    height: 177px;
    margin: 3px 0 0 3px;
    border: 1px solid #d2d2d2;
    border-right: none;
    white-space: nowrap;
    overflow: hidden;
}
.card h3 {
    padding-left: 4px;
    line-height: 23px;
}
.card p {
    padding-left: 2px;
    line-height: 26px;
}
.thumb {
    display: block;
    width: 124px;
    height: 112px;
    margin-left: 1px;
}
.curves {
    display: flex;
    flex-direction: column;
    align-items: center;
    flex: none;
    width: 47px;
    padding-right: 1px;
    border-left: 2px solid #8c8c8c;
}
.pair {
    display: flex;
    align-items: center;
    align-self: flex-start;
}
.hgrip {
    width: 40px;
    height: 7px;
    margin-top: 23px;
    background: radial-gradient(circle, #aaa 1px, transparent 2px) 0 0 / 5px 7px;
}
.hgrip.second {
    margin-top: 1px;
}
.hsep {
    width: 38px;
    height: 1px;
    margin: 3px 0 2px;
    background-color: #ccc;
}
.leftmore {
    align-self: stretch;
    justify-content: flex-start;
    height: 14px;
    padding-left: 7px;
    border-bottom: 1px solid #ccc;
}
.leftmore::before {
    content: "";
    border: 3px solid transparent;
    border-right: 4px solid #111;
    border-left: none;
}
.canvas {
    position: relative;
    flex: 1;
    overflow: hidden;
    background: linear-gradient(#92bbde, #b4cde2 30%, #e4e5e6 72%, #e6e6e6);
}
.mold {
    position: absolute;
    left: 335px;
    top: 250px;
    width: 280px;
    height: 320px;
}
.screws {
    position: absolute;
    left: 1155px;
    top: 320px;
    width: 120px;
    height: 180px;
}
.triad {
    position: absolute;
    left: 5px;
    bottom: 16px;
    width: 130px;
    height: 110px;
}
.axis {
    font-family: "Liberation Sans", sans-serif;
    font-size: 32px;
}
.cursor {
    position: absolute;
    left: 595px;
    top: 120px;
    width: 120px;
    height: 100px;
}
.bubble {
    position: absolute;
    right: -27px;
    top: 402px;
    width: 48px;
    height: 48px;
    padding-left: 4px;
    justify-content: flex-start;
    border: 2px solid #d5ead5;
    border-radius: 50%;
    background-color: #35a853;
    color: #fff;
}

/* Bottom bar */
.bottom {
    position: relative;
    display: flex;
    flex: none;
    height: 34px;
    padding-left: 453px;
}
.abs {
    font-family: "Liberation Serif", serif;
    font-size: 9px;
    font-weight: bold;
    fill: #223;
}
.txt {
    font-family: "Liberation Serif", serif;
    font-size: 11px;
    font-weight: bold;
    fill: #6a3f94;
}
.ime {
    position: absolute;
    right: 31px;
    bottom: 0;
    display: flex;
    align-items: center;
    height: 24px;
    border: 1px solid #a9b0c0;
    padding: 0 0 0 14px;
    background-color: #fff;
}
.ime button {
    width: 22px;
}
.ime button svg {
    width: 16px;
    height: 16px;
}
.ime .zh {
    font-size: 15px;
    font-weight: bold;
    color: #1f6fc4;
}
.sogou {
    position: absolute;
    left: -15px;
    top: -4px;
    width: 28px;
    height: 28px;
}
.dock {
    position: absolute;
    right: 0;
    bottom: 17px;
    width: 10px;
    height: 60px;
    border: 3px solid #4a5160;
    border-right: none;
    border-radius: 3px 0 0 3px;
    background-color: #1f2532;
}
```
